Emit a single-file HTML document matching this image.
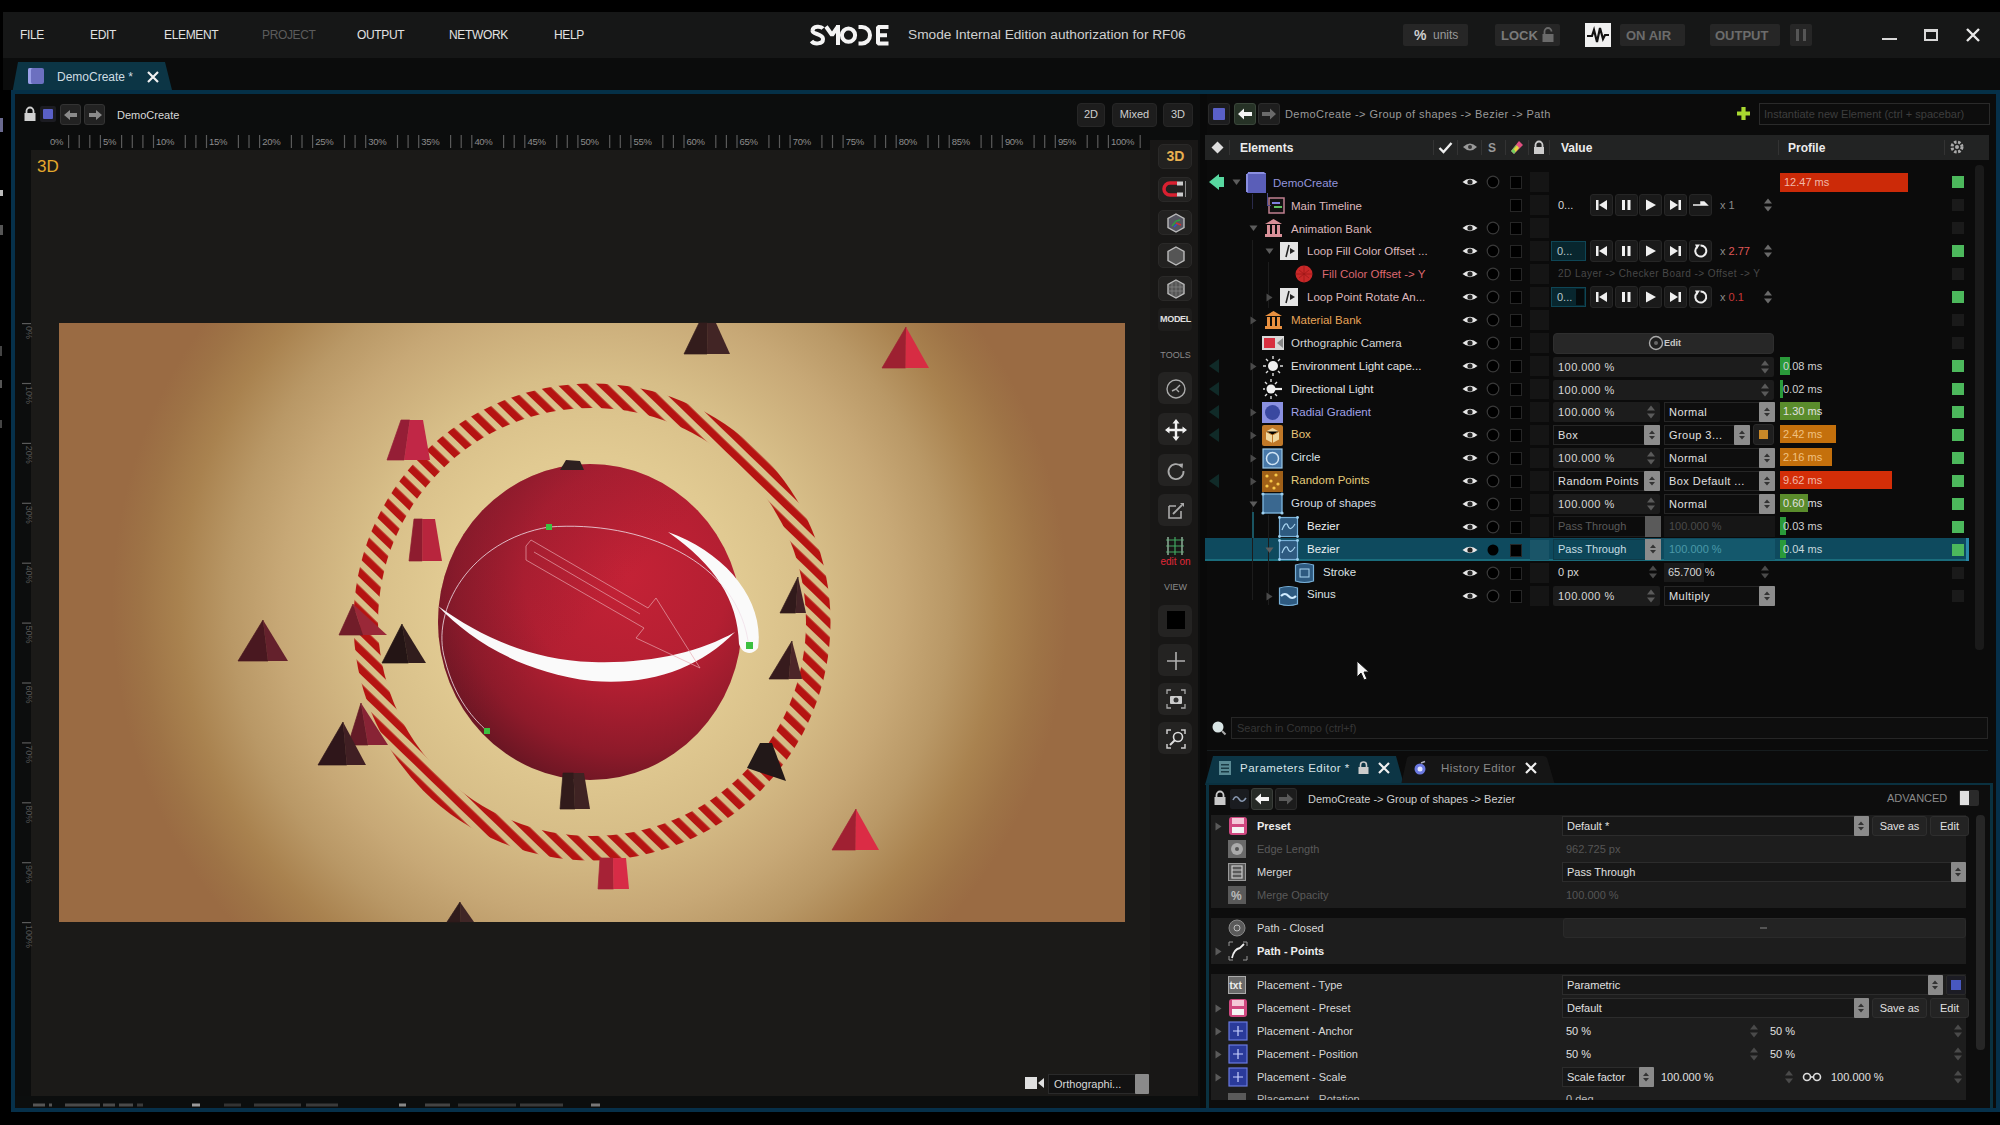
<!DOCTYPE html>
<html><head><meta charset="utf-8">
<style>
*{margin:0;padding:0;box-sizing:border-box}
html,body{width:2000px;height:1125px;overflow:hidden;background:#000;font-family:"Liberation Sans",sans-serif;color:#ddd}
.a{position:absolute}
.t{position:absolute;white-space:nowrap;line-height:1}
svg{position:absolute;overflow:visible}
</style></head><body>
<div class="a" style="left:3px;top:12px;width:1997px;height:46px;background:#161717;"></div>
<div class="a" style="left:3px;top:58px;width:1997px;height:32px;background:#0b0c0c;"></div>
<div class="a" style="left:0px;top:1112px;width:2000px;height:13px;background:#000;"></div>
<div class="t" style="left:20px;top:29.0px;font-size:12px;color:#e2e2e2;font-weight:normal;letter-spacing:-0.35px">FILE</div>
<div class="t" style="left:90px;top:29.0px;font-size:12px;color:#e2e2e2;font-weight:normal;letter-spacing:-0.35px">EDIT</div>
<div class="t" style="left:164px;top:29.0px;font-size:12px;color:#e2e2e2;font-weight:normal;letter-spacing:-0.35px">ELEMENT</div>
<div class="t" style="left:262px;top:29.0px;font-size:12px;color:#5c5c5c;font-weight:normal;letter-spacing:-0.35px">PROJECT</div>
<div class="t" style="left:357px;top:29.0px;font-size:12px;color:#e2e2e2;font-weight:normal;letter-spacing:-0.35px">OUTPUT</div>
<div class="t" style="left:449px;top:29.0px;font-size:12px;color:#e2e2e2;font-weight:normal;letter-spacing:-0.35px">NETWORK</div>
<div class="t" style="left:554px;top:29.0px;font-size:12px;color:#e2e2e2;font-weight:normal;letter-spacing:-0.35px">HELP</div>
<svg style="left:808px;top:22px" width="84" height="26"><g fill="none" stroke="#f4f4f4" stroke-width="4" stroke-linejoin="bevel"><path d="M15 6.5C13 4 5 3.5 4.5 8.5C4 12.5 15 11.5 15 17C15 22.5 6 22.5 3.5 19"/><path d="M18 4.5L24 13L30 4.5"/><path d="M30 3V23"/><circle cx="40.5" cy="13.2" r="6.6"/><path d="M50.5 5H54A8 8.2 0 0 1 54 21.4H50.5"/><path d="M80.5 5H70V21.4H80.5M70 13.2H79"/></g></svg>
<div class="t" style="left:908px;top:28.1px;font-size:13.7px;color:#d0d0d0;font-weight:normal;">Smode Internal Edition authorization for RF06</div>
<div class="a" style="left:1403px;top:24px;width:65px;height:22px;background:#262626;border-radius:2px;"></div>
<div class="t" style="left:1414px;top:28.0px;font-size:14px;color:#cfcfcf;font-weight:bold;">%</div>
<div class="t" style="left:1433px;top:29.0px;font-size:12px;color:#9a9a9a;font-weight:normal;">units</div>
<div class="a" style="left:1495px;top:24px;width:65px;height:22px;background:#262626;border-radius:2px;"></div>
<div class="t" style="left:1501px;top:28.5px;font-size:13px;color:#7a7a7a;font-weight:bold;">LOCK</div>
<svg style="left:1541px;top:27px" width="14" height="16"><path d="M3.5 7V4.5a3.5 3.5 0 0 1 7 0" fill="none" stroke="#6a6a6a" stroke-width="1.8"/><rect x="1.5" y="7" width="11" height="8" fill="#6a6a6a"/></svg>
<div class="a" style="left:1585px;top:23px;width:26px;height:24px;background:#f0f0f0;"></div>
<svg style="left:1585px;top:23px" width="26" height="24"><polyline points="2,13 7,13 9,7 12,19 15,5 18,16 20,12 24,12" fill="none" stroke="#111" stroke-width="2.2"/></svg>
<div class="a" style="left:1620px;top:24px;width:65px;height:22px;background:#262626;border-radius:2px;"></div>
<div class="t" style="left:1626px;top:28.5px;font-size:13px;color:#6c6c6c;font-weight:bold;">ON AIR</div>
<div class="a" style="left:1710px;top:24px;width:70px;height:22px;background:#262626;border-radius:2px;"></div>
<div class="t" style="left:1715px;top:28.5px;font-size:13px;color:#6c6c6c;font-weight:bold;">OUTPUT</div>
<div class="a" style="left:1790px;top:24px;width:22px;height:22px;background:#262626;border-radius:2px;"></div>
<div class="a" style="left:1796px;top:29px;width:3px;height:12px;background:#555;"></div>
<div class="a" style="left:1803px;top:29px;width:3px;height:12px;background:#555;"></div>
<div class="a" style="left:1882px;top:38px;width:15px;height:2px;background:#d8d8d8;"></div>
<div class="a" style="left:1924px;top:29px;width:14px;height:12px;border:2px solid #d8d8d8;border-top-width:3px"></div>
<svg style="left:1965px;top:27px" width="16" height="16"><path d="M2 2L14 14M14 2L2 14" stroke="#e8e8e8" stroke-width="2.4"/></svg>
<svg style="left:10px;top:61px" width="170" height="33"><path d="M2 33 L8 1 L155 1 L163 33 Z" fill="#0c3545"/></svg>
<div class="a" style="left:28px;top:68px;width:16px;height:16px;background:#6c70c0;border-radius:2px;box-shadow:inset 3px 0 0 #9aa0e8"></div>
<div class="t" style="left:57px;top:71.0px;font-size:12px;color:#cfdde3;font-weight:normal;">DemoCreate *</div>
<svg style="left:147px;top:71px" width="12" height="12"><path d="M1 1L11 11M11 1L1 11" stroke="#f0f0f0" stroke-width="2.2"/></svg>
<div class="a" style="left:11px;top:90px;width:1989px;height:4px;background:#053047;"></div>
<div class="a" style="left:11px;top:90px;width:4px;height:1022px;background:#06304a;"></div>
<div class="a" style="left:11px;top:1108px;width:1989px;height:4px;background:#06304a;"></div>
<div class="a" style="left:1996px;top:90px;width:4px;height:1022px;background:#06304a;"></div>
<div class="a" style="left:15px;top:94px;width:1185px;height:1014px;background:#0c0d0d;"></div>
<div class="a" style="left:31px;top:150px;width:1119px;height:946px;background:#1b1a18;"></div>
<div class="a" style="left:1150px;top:140px;width:48px;height:956px;background:#181716;"></div>
<div class="a" style="left:15px;top:1096px;width:1185px;height:12px;background:#0c0e0e;"></div>
<svg style="left:23px;top:106px" width="14" height="16"><path d="M3.5 7V5a3.5 3.5 0 0 1 7 0v2" fill="none" stroke="#d0d0d0" stroke-width="1.8"/><rect x="1.5" y="7" width="11" height="8" fill="#d0d0d0"/></svg>
<div class="a" style="left:40px;top:106px;width:16px;height:16px;background:#1c1c22;border-radius:2px"></div>
<div class="a" style="left:43px;top:109px;width:10px;height:10px;background:#5a60c8;border-radius:1px"></div>
<div class="a" style="left:60px;top:104px;width:21px;height:21px;background:#222;border:1px solid #333;border-radius:3px"></div>
<div class="a" style="left:84px;top:104px;width:21px;height:21px;background:#222;border:1px solid #333;border-radius:3px"></div>
<svg style="left:62px;top:107px" width="18" height="16"><path d="M2 8L8 3V6H15V10H8V13Z" fill="#8a8a8a"/></svg>
<svg style="left:86px;top:107px" width="18" height="16"><path d="M16 8L10 3V6H3V10H10V13Z" fill="#8a8a8a"/></svg>
<div class="t" style="left:117px;top:109.5px;font-size:11px;color:#d8d8d8;font-weight:normal;">DemoCreate</div>
<div class="a" style="left:1077px;top:103px;width:28px;height:24px;background:#1d1d1d;border:1px solid #262626;border-radius:4px"></div>
<div class="t" style="left:1077px;top:109px;width:28px;text-align:center;font-size:11px;color:#cfcfcf">2D</div>
<div class="a" style="left:1112px;top:103px;width:45px;height:24px;background:#1d1d1d;border:1px solid #262626;border-radius:4px"></div>
<div class="t" style="left:1112px;top:109px;width:45px;text-align:center;font-size:11px;color:#cfcfcf">Mixed</div>
<div class="a" style="left:1163px;top:103px;width:30px;height:24px;background:#1d1d1d;border:1px solid #262626;border-radius:4px"></div>
<div class="t" style="left:1163px;top:109px;width:30px;text-align:center;font-size:11px;color:#cfcfcf">3D</div>
<svg style="left:0px;top:130px" width="1150" height="20"><text x="50.0" y="14.5" font-size="9.5" fill="#8c8c8c" font-family="Liberation Sans" letter-spacing="-0.3">0%</text><text x="103.0" y="14.5" font-size="9.5" fill="#8c8c8c" font-family="Liberation Sans" letter-spacing="-0.3">5%</text><text x="156.1" y="14.5" font-size="9.5" fill="#8c8c8c" font-family="Liberation Sans" letter-spacing="-0.3">10%</text><text x="209.1" y="14.5" font-size="9.5" fill="#8c8c8c" font-family="Liberation Sans" letter-spacing="-0.3">15%</text><text x="262.2" y="14.5" font-size="9.5" fill="#8c8c8c" font-family="Liberation Sans" letter-spacing="-0.3">20%</text><text x="315.2" y="14.5" font-size="9.5" fill="#8c8c8c" font-family="Liberation Sans" letter-spacing="-0.3">25%</text><text x="368.3" y="14.5" font-size="9.5" fill="#8c8c8c" font-family="Liberation Sans" letter-spacing="-0.3">30%</text><text x="421.3" y="14.5" font-size="9.5" fill="#8c8c8c" font-family="Liberation Sans" letter-spacing="-0.3">35%</text><text x="474.4" y="14.5" font-size="9.5" fill="#8c8c8c" font-family="Liberation Sans" letter-spacing="-0.3">40%</text><text x="527.5" y="14.5" font-size="9.5" fill="#8c8c8c" font-family="Liberation Sans" letter-spacing="-0.3">45%</text><text x="580.5" y="14.5" font-size="9.5" fill="#8c8c8c" font-family="Liberation Sans" letter-spacing="-0.3">50%</text><text x="633.5" y="14.5" font-size="9.5" fill="#8c8c8c" font-family="Liberation Sans" letter-spacing="-0.3">55%</text><text x="686.6" y="14.5" font-size="9.5" fill="#8c8c8c" font-family="Liberation Sans" letter-spacing="-0.3">60%</text><text x="739.6" y="14.5" font-size="9.5" fill="#8c8c8c" font-family="Liberation Sans" letter-spacing="-0.3">65%</text><text x="792.7" y="14.5" font-size="9.5" fill="#8c8c8c" font-family="Liberation Sans" letter-spacing="-0.3">70%</text><text x="845.8" y="14.5" font-size="9.5" fill="#8c8c8c" font-family="Liberation Sans" letter-spacing="-0.3">75%</text><text x="898.8" y="14.5" font-size="9.5" fill="#8c8c8c" font-family="Liberation Sans" letter-spacing="-0.3">80%</text><text x="951.8" y="14.5" font-size="9.5" fill="#8c8c8c" font-family="Liberation Sans" letter-spacing="-0.3">85%</text><text x="1004.9" y="14.5" font-size="9.5" fill="#8c8c8c" font-family="Liberation Sans" letter-spacing="-0.3">90%</text><text x="1057.9" y="14.5" font-size="9.5" fill="#8c8c8c" font-family="Liberation Sans" letter-spacing="-0.3">95%</text><text x="1111.0" y="14.5" font-size="9.5" fill="#8c8c8c" font-family="Liberation Sans" letter-spacing="-0.3">100%</text><rect x="68.0" y="5" width="1.2" height="13" fill="#5a5a5a"/><rect x="78.6" y="5" width="1.2" height="13" fill="#5a5a5a"/><rect x="89.2" y="5" width="1.2" height="13" fill="#5a5a5a"/><rect x="99.8" y="5" width="1.2" height="13" fill="#5a5a5a"/><rect x="121.0" y="5" width="1.2" height="13" fill="#5a5a5a"/><rect x="131.7" y="5" width="1.2" height="13" fill="#5a5a5a"/><rect x="142.3" y="5" width="1.2" height="13" fill="#5a5a5a"/><rect x="152.9" y="5" width="1.2" height="13" fill="#5a5a5a"/><rect x="184.7" y="5" width="1.2" height="13" fill="#5a5a5a"/><rect x="195.3" y="5" width="1.2" height="13" fill="#5a5a5a"/><rect x="205.9" y="5" width="1.2" height="13" fill="#5a5a5a"/><rect x="237.8" y="5" width="1.2" height="13" fill="#5a5a5a"/><rect x="248.4" y="5" width="1.2" height="13" fill="#5a5a5a"/><rect x="259.0" y="5" width="1.2" height="13" fill="#5a5a5a"/><rect x="290.8" y="5" width="1.2" height="13" fill="#5a5a5a"/><rect x="301.4" y="5" width="1.2" height="13" fill="#5a5a5a"/><rect x="312.0" y="5" width="1.2" height="13" fill="#5a5a5a"/><rect x="343.9" y="5" width="1.2" height="13" fill="#5a5a5a"/><rect x="354.5" y="5" width="1.2" height="13" fill="#5a5a5a"/><rect x="365.1" y="5" width="1.2" height="13" fill="#5a5a5a"/><rect x="396.9" y="5" width="1.2" height="13" fill="#5a5a5a"/><rect x="407.5" y="5" width="1.2" height="13" fill="#5a5a5a"/><rect x="418.1" y="5" width="1.2" height="13" fill="#5a5a5a"/><rect x="450.0" y="5" width="1.2" height="13" fill="#5a5a5a"/><rect x="460.6" y="5" width="1.2" height="13" fill="#5a5a5a"/><rect x="471.2" y="5" width="1.2" height="13" fill="#5a5a5a"/><rect x="503.0" y="5" width="1.2" height="13" fill="#5a5a5a"/><rect x="513.6" y="5" width="1.2" height="13" fill="#5a5a5a"/><rect x="524.2" y="5" width="1.2" height="13" fill="#5a5a5a"/><rect x="556.1" y="5" width="1.2" height="13" fill="#5a5a5a"/><rect x="566.7" y="5" width="1.2" height="13" fill="#5a5a5a"/><rect x="577.3" y="5" width="1.2" height="13" fill="#5a5a5a"/><rect x="609.1" y="5" width="1.2" height="13" fill="#5a5a5a"/><rect x="619.7" y="5" width="1.2" height="13" fill="#5a5a5a"/><rect x="630.3" y="5" width="1.2" height="13" fill="#5a5a5a"/><rect x="662.2" y="5" width="1.2" height="13" fill="#5a5a5a"/><rect x="672.8" y="5" width="1.2" height="13" fill="#5a5a5a"/><rect x="683.4" y="5" width="1.2" height="13" fill="#5a5a5a"/><rect x="715.2" y="5" width="1.2" height="13" fill="#5a5a5a"/><rect x="725.8" y="5" width="1.2" height="13" fill="#5a5a5a"/><rect x="736.4" y="5" width="1.2" height="13" fill="#5a5a5a"/><rect x="768.3" y="5" width="1.2" height="13" fill="#5a5a5a"/><rect x="778.9" y="5" width="1.2" height="13" fill="#5a5a5a"/><rect x="789.5" y="5" width="1.2" height="13" fill="#5a5a5a"/><rect x="821.3" y="5" width="1.2" height="13" fill="#5a5a5a"/><rect x="831.9" y="5" width="1.2" height="13" fill="#5a5a5a"/><rect x="842.5" y="5" width="1.2" height="13" fill="#5a5a5a"/><rect x="874.4" y="5" width="1.2" height="13" fill="#5a5a5a"/><rect x="885.0" y="5" width="1.2" height="13" fill="#5a5a5a"/><rect x="895.6" y="5" width="1.2" height="13" fill="#5a5a5a"/><rect x="927.4" y="5" width="1.2" height="13" fill="#5a5a5a"/><rect x="938.0" y="5" width="1.2" height="13" fill="#5a5a5a"/><rect x="948.6" y="5" width="1.2" height="13" fill="#5a5a5a"/><rect x="980.5" y="5" width="1.2" height="13" fill="#5a5a5a"/><rect x="991.1" y="5" width="1.2" height="13" fill="#5a5a5a"/><rect x="1001.7" y="5" width="1.2" height="13" fill="#5a5a5a"/><rect x="1033.5" y="5" width="1.2" height="13" fill="#5a5a5a"/><rect x="1044.1" y="5" width="1.2" height="13" fill="#5a5a5a"/><rect x="1054.7" y="5" width="1.2" height="13" fill="#5a5a5a"/><rect x="1086.6" y="5" width="1.2" height="13" fill="#5a5a5a"/><rect x="1097.2" y="5" width="1.2" height="13" fill="#5a5a5a"/><rect x="1107.8" y="5" width="1.2" height="13" fill="#5a5a5a"/><rect x="1139.6" y="5" width="1.2" height="13" fill="#5a5a5a"/></svg>
<svg style="left:15px;top:150px" width="16" height="946"><rect x="7" y="173.0" width="9" height="1.2" fill="#5a5a5a"/><text transform="translate(11,176.0) rotate(90)" font-size="9" fill="#555" font-family="Liberation Sans">0%</text><rect x="7" y="232.9" width="9" height="1.2" fill="#5a5a5a"/><text transform="translate(11,235.9) rotate(90)" font-size="9" fill="#555" font-family="Liberation Sans">10%</text><rect x="7" y="292.8" width="9" height="1.2" fill="#5a5a5a"/><text transform="translate(11,295.8) rotate(90)" font-size="9" fill="#555" font-family="Liberation Sans">20%</text><rect x="7" y="352.7" width="9" height="1.2" fill="#5a5a5a"/><text transform="translate(11,355.7) rotate(90)" font-size="9" fill="#555" font-family="Liberation Sans">30%</text><rect x="7" y="412.6" width="9" height="1.2" fill="#5a5a5a"/><text transform="translate(11,415.6) rotate(90)" font-size="9" fill="#555" font-family="Liberation Sans">40%</text><rect x="7" y="472.5" width="9" height="1.2" fill="#5a5a5a"/><text transform="translate(11,475.5) rotate(90)" font-size="9" fill="#555" font-family="Liberation Sans">50%</text><rect x="7" y="532.4" width="9" height="1.2" fill="#5a5a5a"/><text transform="translate(11,535.4) rotate(90)" font-size="9" fill="#555" font-family="Liberation Sans">60%</text><rect x="7" y="592.3" width="9" height="1.2" fill="#5a5a5a"/><text transform="translate(11,595.3) rotate(90)" font-size="9" fill="#555" font-family="Liberation Sans">70%</text><rect x="7" y="652.2" width="9" height="1.2" fill="#5a5a5a"/><text transform="translate(11,655.2) rotate(90)" font-size="9" fill="#555" font-family="Liberation Sans">80%</text><rect x="7" y="712.1" width="9" height="1.2" fill="#5a5a5a"/><text transform="translate(11,715.1) rotate(90)" font-size="9" fill="#555" font-family="Liberation Sans">90%</text><rect x="7" y="772.0" width="9" height="1.2" fill="#5a5a5a"/><text transform="translate(11,775.0) rotate(90)" font-size="9" fill="#555" font-family="Liberation Sans">100%</text></svg>
<div class="t" style="left:37px;top:157.5px;font-size:17px;color:#e4a82c;font-weight:normal;">3D</div>
<div class="a" style="left:59px;top:323px;width:1066px;height:599px;background:radial-gradient(circle at 531px 282px,#e7d49c 0px,#e1ca92 150px,#d7be88 230px,#c7a876 310px,#b99866 360px,#a9824f 410px,#9e7346 450px,#9a6b43 478px,#9a6b43 800px)"></div>
<svg style="left:59px;top:323px" width="1066" height="599" viewBox="59 323 1066 599">
<defs>
<radialGradient id="sph" cx="0.62" cy="0.35" r="0.75">
<stop offset="0" stop-color="#c42236"/>
<stop offset="0.45" stop-color="#b41f32"/>
<stop offset="0.75" stop-color="#8e1a2a"/>
<stop offset="1" stop-color="#5a1420"/>
</radialGradient>
<linearGradient id="sphShade" x1="0" y1="0" x2="1" y2="1">
<stop offset="0" stop-color="#7a1a2c" stop-opacity="0.55"/>
<stop offset="0.5" stop-color="#7a1a2c" stop-opacity="0"/>
</linearGradient>
<pattern id="stripes" patternUnits="userSpaceOnUse" width="13.8" height="13.8" patternTransform="rotate(-46)">
<rect x="0" y="0" width="7.6" height="13.8" fill="#b51412"/>
</pattern>
<mask id="ringmask">
<circle cx="592" cy="622" r="238.5" fill="white"/>
<circle cx="592" cy="622" r="214" fill="black"/>
</mask>
<linearGradient id="pyrD" x1="0" y1="0" x2="1" y2="1">
<stop offset="0" stop-color="#3a2220"/><stop offset="1" stop-color="#5a2a2c"/>
</linearGradient>
<linearGradient id="pyrR" x1="0" y1="0" x2="1" y2="1">
<stop offset="0" stop-color="#b8283c"/><stop offset="1" stop-color="#d03048"/>
</linearGradient>
</defs>
<rect x="59" y="323" width="1066" height="599" fill="url(#stripes)" mask="url(#ringmask)"/>
<ellipse cx="590" cy="622" rx="152" ry="158" fill="url(#sph)"/>
<ellipse cx="590" cy="622" rx="152" ry="158" fill="url(#sphShade)"/>
<polygon points="699,323 707.5,323 707.0,354 684,354" fill="#331c1c" stroke="#331c1c" stroke-width="0.7"/><polygon points="707.5,323 716,323 730,354 707.0,354" fill="#422525"/><polygon points="906,327 882,368 905.5,368" fill="#9d2031" stroke="#9d2031" stroke-width="0.7"/><polygon points="906,327 905.5,368 929,368" fill="#d72c43"/><polygon points="401,420 409.8,420 404.2,460 387,460" fill="#951e36" stroke="#951e36" stroke-width="0.7"/><polygon points="409.8,420 423,420 430,460 404.2,460" fill="#c12746"/><polygon points="414,519 422.4,519 422.2,561 409,561" fill="#8e1c2f" stroke="#8e1c2f" stroke-width="0.7"/><polygon points="422.4,519 435,519 442,561 422.2,561" fill="#b8253d"/><polygon points="263,620 238,661 268.0,661" fill="#491820" stroke="#491820" stroke-width="0.7"/><polygon points="263,620 268.0,661 288,661" fill="#64212c"/><polygon points="353,604 339,635 363.0,635" fill="#711d29" stroke="#711d29" stroke-width="0.7"/><polygon points="353,604 363.0,635 387,635" fill="#9a2838"/><polygon points="402,624 382,663 408.4,663" fill="#241515" stroke="#241515" stroke-width="0.7"/><polygon points="402,624 408.4,663 426,663" fill="#311d1d"/><polygon points="361,703 348,745 368.0,745" fill="#641a27" stroke="#641a27" stroke-width="0.7"/><polygon points="361,703 368.0,745 388,745" fill="#882335"/><polygon points="343,722 318,765 346.8,765" fill="#2f161a" stroke="#2f161a" stroke-width="0.7"/><polygon points="343,722 346.8,765 366,765" fill="#401f23"/><polygon points="563,773 573.5,773 575.0,809 560,809" fill="#311b1b" stroke="#311b1b" stroke-width="0.7"/><polygon points="573.5,773 584,773 590,809 575.0,809" fill="#3f2323"/><polygon points="560,470 566,460 580,461 584,470" fill="#2e2020"/><polygon points="798,577 780,613 795.6,613" fill="#311a1b" stroke="#311a1b" stroke-width="0.7"/><polygon points="798,577 795.6,613 806,613" fill="#432326"/><polygon points="792,641 769,679 788.8,679" fill="#371b1d" stroke="#371b1d" stroke-width="0.7"/><polygon points="792,641 788.8,679 802,679" fill="#4c2628"/><polygon points="760,743 772,743 786,781 747,768" fill="#221818"/><polygon points="856,809 832,850 855.5,850" fill="#a02032" stroke="#a02032" stroke-width="0.7"/><polygon points="856,809 855.5,850 879,850" fill="#db2c45"/><polygon points="600,858 613.0,858 613.5,889 598,889" fill="#a62236" stroke="#a62236" stroke-width="0.7"/><polygon points="613.0,858 626,858 629,889 613.5,889" fill="#d72c46"/><polygon points="460,902 447,922 460.5,922" fill="#2f1b1b" stroke="#2f1b1b" stroke-width="0.7"/><polygon points="460,902 460.5,922 474,922" fill="#402626"/>
<path d="M438,606 C470,640 520,672 592,681 C650,686 700,668 735,632 C700,652 650,664 592,662 C530,660 480,636 438,606 Z" fill="#fafafa"/>
<path d="M668,532 C725,552 765,600 758,648 C752,656 742,654 739,644 C738,600 715,565 668,532 Z" fill="#fafafa"/>
<path d="M749,648 C740,560 640,520 549,527 C470,540 430,610 445,660 C455,700 475,720 487,731" fill="none" stroke="#f0e0e8" stroke-width="1" opacity="0.8"/>
<path d="M526,546 L531,540 L648,608 L656,598 L700,668 L636,638 L644,628 L526,560 Z M534,552 L640,614" fill="none" stroke="#e8a8b0" stroke-width="0.9" opacity="0.75"/>
<rect x="546" y="524" width="6" height="6" fill="#3cc040"/>
<rect x="484" y="728" width="6" height="6" fill="#3cc040"/>
<rect x="746" y="642" width="7" height="7" fill="#3cc040"/>
</svg>
<div class="a" style="left:1158px;top:144px;width:34px;height:25px;background:#222120;border-radius:5px;border:1px solid #2a2928"></div>
<div class="a" style="left:1158px;top:177px;width:34px;height:25px;background:#222120;border-radius:5px;border:1px solid #2a2928"></div>
<div class="a" style="left:1158px;top:210px;width:34px;height:25px;background:#222120;border-radius:5px;border:1px solid #2a2928"></div>
<div class="a" style="left:1158px;top:243px;width:34px;height:25px;background:#222120;border-radius:5px;border:1px solid #2a2928"></div>
<div class="a" style="left:1158px;top:276px;width:34px;height:25px;background:#222120;border-radius:5px;border:1px solid #2a2928"></div>
<div class="a" style="left:1158px;top:308px;width:34px;height:23px;background:#1e1d1c;border-radius:4px"></div>
<div class="a" style="left:1158px;top:372px;width:34px;height:32px;background:#242322;border-radius:6px"></div>
<div class="a" style="left:1158px;top:413px;width:34px;height:32px;background:#242322;border-radius:6px"></div>
<div class="a" style="left:1158px;top:454px;width:34px;height:32px;background:#242322;border-radius:6px"></div>
<div class="a" style="left:1158px;top:494px;width:34px;height:32px;background:#242322;border-radius:6px"></div>
<div class="a" style="left:1158px;top:605px;width:34px;height:32px;background:#242322;border-radius:6px"></div>
<div class="a" style="left:1158px;top:644px;width:34px;height:32px;background:#242322;border-radius:6px"></div>
<div class="a" style="left:1158px;top:683px;width:34px;height:32px;background:#242322;border-radius:6px"></div>
<div class="a" style="left:1158px;top:722px;width:34px;height:32px;background:#242322;border-radius:6px"></div>
<div class="t" style="left:1159px;top:149px;width:33px;text-align:center;font-size:14px;font-weight:bold;color:#e8b050">3D</div>
<svg style="left:1163px;top:180px" width="26" height="18"><path d="M14 3H7a6 6 0 0 0 0 12h7" fill="none" stroke="#d82030" stroke-width="3.5"/><rect x="14" y="1.5" width="6" height="4" fill="#ccc"/><rect x="14" y="12.5" width="6" height="4" fill="#ccc"/><rect x="22" y="1" width="1" height="16" fill="#888"/></svg>
<svg style="left:1165px;top:212px" width="22" height="22"><path d="M11 2L19 6.5V15.5L11 20L3 15.5V6.5Z" fill="#555560" stroke="#bbb" stroke-width="1.4"/><path d="M7 14L11 9L15 8" stroke="#30a040" stroke-width="1.4" fill="none"/><path d="M9 15L13 11" stroke="#3050d0" stroke-width="1.4"/><path d="M11 11L16 13" stroke="#d03030" stroke-width="1.4"/></svg>
<svg style="left:1165px;top:245px" width="22" height="22"><path d="M11 2L19 6.5V15.5L11 20L3 15.5V6.5Z" fill="#555" stroke="#bbb" stroke-width="1.4"/></svg>
<svg style="left:1165px;top:278px" width="22" height="22"><path d="M11 2L19 6.5V15.5L11 20L3 15.5V6.5Z" fill="#555" stroke="#bbb" stroke-width="1.4"/><path d="M7 5V17M11 3V19M15 5V17M3 9H19M3 13H19" stroke="#888" stroke-width="0.7"/></svg>
<div class="t" style="left:1159px;top:315px;width:33px;text-align:center;font-size:9px;font-weight:bold;color:#e0e0e0;letter-spacing:-0.3px">MODEL</div>
<div class="t" style="left:1159px;top:351px;width:33px;text-align:center;font-size:9px;color:#8a8a8a">TOOLS</div>
<svg style="left:1165px;top:378px" width="22" height="22"><circle cx="11" cy="11" r="9" fill="none" stroke="#aaa" stroke-width="1.4"/><path d="M11 11L15 7M11 11L14 14M11 11L7 13" stroke="#aaa" stroke-width="1.4"/></svg>
<svg style="left:1165px;top:419px" width="22" height="22"><path d="M11 2V20M2 11H20" stroke="#f0f0f0" stroke-width="2.4"/><path d="M11 0L7.5 4.5H14.5ZM11 22L7.5 17.5H14.5ZM0 11L4.5 7.5V14.5ZM22 11L17.5 7.5V14.5Z" fill="#f0f0f0"/></svg>
<svg style="left:1165px;top:460px" width="22" height="22"><path d="M16.5 6.5A7.5 7.5 0 1 0 18.5 11" fill="none" stroke="#aaa" stroke-width="1.8"/><path d="M13 4L18 3.5L17.5 8.5Z" fill="#aaa"/></svg>
<svg style="left:1165px;top:500px" width="22" height="22"><path d="M4 6H11M4 6V18H16V11" fill="none" stroke="#aaa" stroke-width="1.6"/><path d="M8 14L17 5" stroke="#aaa" stroke-width="1.8"/><path d="M15 3L19 3L19 7Z" fill="#aaa"/></svg>
<svg style="left:1164px;top:535px" width="24" height="22"><path d="M4 2V20M11 2V20M18 2V20M2 5H20M2 11H20M2 17H20" stroke="#40a860" stroke-width="1.2"/><path d="M4 2V20M18 2V20" stroke="#9a9a9a" stroke-width="1.2"/></svg>
<div class="t" style="left:1155px;top:557px;width:41px;text-align:center;font-size:10px;color:#e02838">edit on</div>
<div class="t" style="left:1159px;top:583px;width:33px;text-align:center;font-size:9px;color:#8a8a8a">VIEW</div>
<div class="a" style="left:1167px;top:611px;width:18px;height:18px;background:#000;"></div>
<svg style="left:1165px;top:650px" width="22" height="22"><path d="M11 2V20M2 11H20" stroke="#b0b0b0" stroke-width="1.6"/></svg>
<svg style="left:1165px;top:688px" width="22" height="22"><path d="M2 6V2H6M16 2H20V6M20 16V20H16M6 20H2V16" fill="none" stroke="#aaa" stroke-width="1.3"/><rect x="5" y="8" width="12" height="8" rx="1" fill="#ccc"/><circle cx="11" cy="12" r="2.5" fill="#333"/></svg>
<svg style="left:1165px;top:728px" width="22" height="22"><path d="M2 6V2H6M16 2H20V6M20 16V20H16M6 20H2V16" fill="none" stroke="#ccc" stroke-width="1.5"/><circle cx="13" cy="9" r="4.5" fill="none" stroke="#ddd" stroke-width="1.6"/><path d="M10 12L5 17" stroke="#ddd" stroke-width="2"/></svg>
<svg style="left:1025px;top:1076px" width="20" height="14"><rect x="0" y="1" width="12" height="12" fill="#e0e0e0"/><path d="M13 7L19 2V12Z" fill="#e0e0e0"/></svg>
<div class="a" style="left:1048px;top:1074px;width:88px;height:20px;background:#121212;border:1px solid #2a2a2a"></div>
<div class="t" style="left:1054px;top:1078.5px;font-size:11px;color:#d8d8d8;font-weight:normal;">Orthographi...</div>
<div class="a" style="left:1135px;top:1074px;width:14px;height:20px;background:#8a8a8a;border-radius:1px"></div>
<div class="a" style="left:1200px;top:94px;width:7px;height:1014px;background:#090909;"></div>
<div class="a" style="left:1207px;top:94px;width:793px;height:1014px;background:#0b0b0b;"></div>
<div class="a" style="left:1208px;top:103px;width:22px;height:22px;background:#1c1c1e;border:1px solid #2a2a2a;border-radius:3px"></div>
<div class="a" style="left:1213px;top:108px;width:12px;height:12px;background:#5a60c8;border-radius:1px"></div>
<div class="a" style="left:1234px;top:103px;width:22px;height:22px;background:#263226;border:1px solid #3a463a;border-radius:3px"></div>
<svg style="left:1236px;top:106px" width="18" height="16"><path d="M2 8L8 2.5V6H16V10H8V13.5Z" fill="#f4f4f4"/></svg>
<div class="a" style="left:1258px;top:103px;width:22px;height:22px;background:#1e1e1e;border:1px solid #2c2c2c;border-radius:3px"></div>
<svg style="left:1260px;top:106px" width="18" height="16"><path d="M16 8L10 2.5V6H2V10H10V13.5Z" fill="#6a6a6a"/></svg>
<div class="t" style="left:1285px;top:108.5px;font-size:11px;color:#9a9a9a;font-weight:normal;letter-spacing:0.42px">DemoCreate -&gt; Group of shapes -&gt; Bezier -&gt; Path</div>
<svg style="left:1736px;top:106px" width="15" height="15"><path d="M7.5 1V14M1 7.5H14" stroke="#a8d830" stroke-width="4.2"/></svg>
<div class="a" style="left:1759px;top:103px;width:231px;height:22px;background:#0d0d0d;border:1px solid #2a2a2a"></div>
<div class="t" style="left:1764px;top:108.5px;font-size:11px;color:#3e3e3e;font-weight:normal;">Instantiate new Element (ctrl + spacebar)</div>
<div class="a" style="left:1205px;top:135px;width:784px;height:25px;background:#222323;"></div>
<svg style="left:1211px;top:141px" width="13" height="13"><path d="M6.5 0.5L12.5 6.5L6.5 12.5L0.5 6.5Z" fill="#ddd"/></svg>
<div class="a" style="left:1229px;top:140px;width:1px;height:15px;background:#333;"></div>
<div class="t" style="left:1240px;top:141.5px;font-size:12px;color:#ececec;font-weight:bold;">Elements</div>
<div class="a" style="left:1433px;top:140px;width:1px;height:15px;background:#333;"></div>
<div class="a" style="left:1457px;top:140px;width:1px;height:15px;background:#333;"></div>
<div class="a" style="left:1481px;top:140px;width:1px;height:15px;background:#333;"></div>
<div class="a" style="left:1505px;top:140px;width:1px;height:15px;background:#333;"></div>
<div class="a" style="left:1528px;top:140px;width:1px;height:15px;background:#333;"></div>
<div class="a" style="left:1549px;top:140px;width:1px;height:15px;background:#333;"></div>
<svg style="left:1438px;top:141px" width="15" height="13"><path d="M1.5 7L5.5 11L13.5 2" fill="none" stroke="#eee" stroke-width="2.4"/></svg>
<svg style="left:1462px;top:142px" width="16" height="10"><path d="M1 5Q8 -2 15 5Q8 12 1 5Z" fill="#9a9a9a"/><circle cx="8" cy="5" r="2" fill="#333"/></svg>
<div class="t" style="left:1488px;top:141.5px;font-size:12px;color:#9a9a9a;font-weight:bold;">S</div>
<svg style="left:1508px;top:139px" width="16" height="16"><path d="M3 12L11 2L15 6L6 15Z" fill="#e05080"/><path d="M3 12L8 6L11 9L6 15Z" fill="#70d060"/><path d="M6 10L9 6.5L11 9L7.5 13Z" fill="#f0d040"/></svg>
<svg style="left:1532px;top:140px" width="14" height="15"><path d="M3.5 7V5a3.5 3.5 0 0 1 7 0v2" fill="none" stroke="#ccc" stroke-width="1.8"/><rect x="2" y="7" width="10" height="7" fill="#ccc"/></svg>
<div class="t" style="left:1561px;top:141.5px;font-size:12px;color:#ececec;font-weight:bold;">Value</div>
<div class="a" style="left:1778px;top:140px;width:1px;height:15px;background:#333;"></div>
<div class="t" style="left:1788px;top:141.5px;font-size:12px;color:#ececec;font-weight:bold;">Profile</div>
<div class="a" style="left:1944px;top:140px;width:1px;height:15px;background:#333;"></div>
<svg style="left:1949px;top:139px" width="16" height="16"><circle cx="8" cy="8" r="5" fill="none" stroke="#aaa" stroke-width="3" stroke-dasharray="2.5 1.5"/><circle cx="8" cy="8" r="2" fill="#aaa"/></svg>
<div class="a" style="left:1975px;top:165px;width:9px;height:485px;background:#1a1a1a;border-radius:4px"></div>
<div class="a" style="left:1205px;top:538px;width:763px;height:23px;background:#0e4a5e;border-bottom:2px solid #1a6c7c"></div>
<div class="a" style="left:1252px;top:194px;width:1px;height:15px;background:#2a2a4a;"></div>
<div class="a" style="left:1252px;top:240px;width:1px;height:360px;background:#1c1c1c;"></div>
<div class="a" style="left:1268px;top:262px;width:1px;height:46px;background:#1c1c1c;"></div>
<div class="a" style="left:1268px;top:515px;width:1px;height:90px;background:#1c1c1c;"></div>
<div class="a" style="left:1252px;top:512px;width:2px;height:26px;background:#1a5562;"></div>
<svg style="left:1232px;top:179px" width="9" height="7"><path d="M0.5 0.5H8.5L4.5 6Z" fill="#5c5c5c"/></svg>
<svg style="left:1245px;top:171px" width="22" height="23"><rect x="2" y="2" width="19" height="20" fill="#5a5eb8"/><path d="M1 3V21H3V3Z" fill="#8a8ee0"/><path d="M3 1H19L21 3H3Z" fill="#8a8ee0"/></svg>
<div class="t" style="left:1273px;top:177.8px;font-size:11.5px;color:#9294dc;font-weight:normal;">DemoCreate</div>
<svg style="left:1462px;top:177px" width="16" height="10"><path d="M0.5 5Q8 -1.5 15.5 5Q8 11.5 0.5 5Z" fill="#e8e8e8"/><circle cx="8" cy="5" r="2.6" fill="#222"/></svg>
<svg style="left:1486px;top:175px" width="14" height="14"><circle cx="7" cy="7" r="5.8" fill="#000" stroke="#3a3a3a" stroke-width="1.2"/></svg>
<div class="a" style="left:1510px;top:176px;width:12px;height:13px;background:#000;border:1px solid #262626"></div>
<div class="a" style="left:1530px;top:172px;width:19px;height:20px;background:#151515;"></div>
<svg style="left:1268px;top:197px" width="17" height="17"><rect x="1" y="1" width="15" height="15" fill="#111" stroke="#c08090" stroke-width="1.5"/><rect x="4" y="5" width="8" height="2" fill="#8080e0"/><rect x="6" y="9" width="8" height="2" fill="#60c060"/></svg>
<div class="a" style="left:1267px;top:193px;width:1px;height:12px;background:#4a4a8a;"></div>
<div class="a" style="left:1267px;top:205px;width:4px;height:1px;background:#4a4a8a;"></div>
<div class="t" style="left:1291px;top:200.6px;font-size:11.5px;color:#dcb8bc;font-weight:normal;">Main Timeline</div>
<div class="a" style="left:1510px;top:199px;width:12px;height:13px;background:#000;border:1px solid #262626"></div>
<div class="a" style="left:1530px;top:195px;width:19px;height:20px;background:#151515;"></div>
<svg style="left:1249px;top:225px" width="9" height="7"><path d="M0.5 0.5H8.5L4.5 6Z" fill="#5c5c5c"/></svg>
<svg style="left:1264px;top:218px" width="19" height="20"><path d="M9.5 1L18 6H1Z" fill="#d89098"/><rect x="3" y="7" width="3" height="9" fill="#d89098"/><rect x="8" y="7" width="3" height="9" fill="#d89098"/><rect x="13" y="7" width="3" height="9" fill="#d89098"/><rect x="1" y="16" width="17" height="3" fill="#d89098"/></svg>
<div class="t" style="left:1291px;top:223.5px;font-size:11.5px;color:#dcb8bc;font-weight:normal;">Animation Bank</div>
<svg style="left:1462px;top:223px" width="16" height="10"><path d="M0.5 5Q8 -1.5 15.5 5Q8 11.5 0.5 5Z" fill="#e8e8e8"/><circle cx="8" cy="5" r="2.6" fill="#222"/></svg>
<svg style="left:1486px;top:221px" width="14" height="14"><circle cx="7" cy="7" r="5.8" fill="#000" stroke="#3a3a3a" stroke-width="1.2"/></svg>
<div class="a" style="left:1510px;top:222px;width:12px;height:13px;background:#000;border:1px solid #262626"></div>
<div class="a" style="left:1530px;top:218px;width:19px;height:20px;background:#151515;"></div>
<svg style="left:1265px;top:248px" width="9" height="7"><path d="M0.5 0.5H8.5L4.5 6Z" fill="#5c5c5c"/></svg>
<svg style="left:1280px;top:242px" width="18" height="18"><rect x="0" y="0" width="18" height="18" fill="#e4e4e4"/><path d="M6 15L9 3" stroke="#222" stroke-width="1.6"/><path d="M10 6L15 9L10 12Z" fill="#222"/></svg>
<div class="t" style="left:1307px;top:246.4px;font-size:11.5px;color:#dcb8bc;font-weight:normal;">Loop Fill Color Offset ...</div>
<svg style="left:1462px;top:246px" width="16" height="10"><path d="M0.5 5Q8 -1.5 15.5 5Q8 11.5 0.5 5Z" fill="#e8e8e8"/><circle cx="8" cy="5" r="2.6" fill="#222"/></svg>
<svg style="left:1486px;top:244px" width="14" height="14"><circle cx="7" cy="7" r="5.8" fill="#000" stroke="#3a3a3a" stroke-width="1.2"/></svg>
<div class="a" style="left:1510px;top:245px;width:12px;height:13px;background:#000;border:1px solid #262626"></div>
<div class="a" style="left:1530px;top:241px;width:19px;height:20px;background:#151515;"></div>
<svg style="left:1295px;top:265px" width="18" height="18"><circle cx="9" cy="9" r="8.5" fill="#c82828"/><path d="M4 5L14 13M14 5L4 13M9 1V17M1 9H17" stroke="#a01818" stroke-width="0.8"/></svg>
<div class="t" style="left:1322px;top:269.2px;font-size:11.5px;color:#dc6870;font-weight:normal;">Fill Color Offset -&gt; Y</div>
<svg style="left:1462px;top:269px" width="16" height="10"><path d="M0.5 5Q8 -1.5 15.5 5Q8 11.5 0.5 5Z" fill="#e8e8e8"/><circle cx="8" cy="5" r="2.6" fill="#222"/></svg>
<svg style="left:1486px;top:267px" width="14" height="14"><circle cx="7" cy="7" r="5.8" fill="#000" stroke="#3a3a3a" stroke-width="1.2"/></svg>
<div class="a" style="left:1510px;top:268px;width:12px;height:13px;background:#000;border:1px solid #262626"></div>
<div class="a" style="left:1530px;top:264px;width:19px;height:20px;background:#151515;"></div>
<svg style="left:1266px;top:292.5px" width="7" height="9"><path d="M0.5 0.5V8.5L6.5 4.5Z" fill="#4a4a4a"/></svg>
<svg style="left:1280px;top:288px" width="18" height="18"><rect x="0" y="0" width="18" height="18" fill="#e4e4e4"/><path d="M6 15L9 3" stroke="#222" stroke-width="1.6"/><path d="M10 6L15 9L10 12Z" fill="#222"/></svg>
<div class="t" style="left:1307px;top:292.1px;font-size:11.5px;color:#dcb8bc;font-weight:normal;">Loop Point Rotate An...</div>
<svg style="left:1462px;top:292px" width="16" height="10"><path d="M0.5 5Q8 -1.5 15.5 5Q8 11.5 0.5 5Z" fill="#e8e8e8"/><circle cx="8" cy="5" r="2.6" fill="#222"/></svg>
<svg style="left:1486px;top:290px" width="14" height="14"><circle cx="7" cy="7" r="5.8" fill="#000" stroke="#3a3a3a" stroke-width="1.2"/></svg>
<div class="a" style="left:1510px;top:291px;width:12px;height:13px;background:#000;border:1px solid #262626"></div>
<div class="a" style="left:1530px;top:287px;width:19px;height:20px;background:#151515;"></div>
<svg style="left:1250px;top:315.5px" width="7" height="9"><path d="M0.5 0.5V8.5L6.5 4.5Z" fill="#4a4a4a"/></svg>
<svg style="left:1264px;top:310px" width="19" height="20"><path d="M9.5 1L18 6H1Z" fill="#e89040"/><rect x="3" y="7" width="3" height="9" fill="#e89040"/><rect x="8" y="7" width="3" height="9" fill="#e89040"/><rect x="13" y="7" width="3" height="9" fill="#e89040"/><rect x="1" y="16" width="17" height="3" fill="#e89040"/></svg>
<div class="t" style="left:1291px;top:315.0px;font-size:11.5px;color:#e8a458;font-weight:normal;">Material Bank</div>
<svg style="left:1462px;top:315px" width="16" height="10"><path d="M0.5 5Q8 -1.5 15.5 5Q8 11.5 0.5 5Z" fill="#e8e8e8"/><circle cx="8" cy="5" r="2.6" fill="#222"/></svg>
<svg style="left:1486px;top:313px" width="14" height="14"><circle cx="7" cy="7" r="5.8" fill="#000" stroke="#3a3a3a" stroke-width="1.2"/></svg>
<div class="a" style="left:1510px;top:314px;width:12px;height:13px;background:#000;border:1px solid #262626"></div>
<div class="a" style="left:1530px;top:310px;width:19px;height:20px;background:#151515;"></div>
<svg style="left:1262px;top:335px" width="22" height="16"><rect x="0" y="1" width="22" height="14" fill="#d8d8d8"/><rect x="2" y="3" width="11" height="10" fill="#d83040"/><path d="M15 8L21 3V13Z" fill="#888"/></svg>
<div class="t" style="left:1291px;top:337.8px;font-size:11.5px;color:#d4d4d4;font-weight:normal;">Orthographic Camera</div>
<svg style="left:1462px;top:338px" width="16" height="10"><path d="M0.5 5Q8 -1.5 15.5 5Q8 11.5 0.5 5Z" fill="#e8e8e8"/><circle cx="8" cy="5" r="2.6" fill="#222"/></svg>
<svg style="left:1486px;top:336px" width="14" height="14"><circle cx="7" cy="7" r="5.8" fill="#000" stroke="#3a3a3a" stroke-width="1.2"/></svg>
<div class="a" style="left:1510px;top:337px;width:12px;height:13px;background:#000;border:1px solid #262626"></div>
<div class="a" style="left:1530px;top:333px;width:19px;height:20px;background:#151515;"></div>
<svg style="left:1250px;top:361.5px" width="7" height="9"><path d="M0.5 0.5V8.5L6.5 4.5Z" fill="#4a4a4a"/></svg>
<svg style="left:1262px;top:355px" width="22" height="22"><circle cx="11" cy="11" r="5" fill="#f0f0f0"/><path d="M11 1V4M11 18V21M1 11H4M18 11H21M4 4L6 6M16 16L18 18M18 4L16 6M4 18L6 16" stroke="#ddd" stroke-width="1.4"/></svg>
<div class="t" style="left:1291px;top:360.7px;font-size:11.5px;color:#e2e2e2;font-weight:normal;">Environment Light cape...</div>
<svg style="left:1462px;top:361px" width="16" height="10"><path d="M0.5 5Q8 -1.5 15.5 5Q8 11.5 0.5 5Z" fill="#e8e8e8"/><circle cx="8" cy="5" r="2.6" fill="#222"/></svg>
<svg style="left:1486px;top:359px" width="14" height="14"><circle cx="7" cy="7" r="5.8" fill="#000" stroke="#3a3a3a" stroke-width="1.2"/></svg>
<div class="a" style="left:1510px;top:360px;width:12px;height:13px;background:#000;border:1px solid #262626"></div>
<div class="a" style="left:1530px;top:356px;width:19px;height:20px;background:#151515;"></div>
<svg style="left:1262px;top:378px" width="22" height="22"><circle cx="9" cy="11" r="4.5" fill="#f0f0f0"/><path d="M9 11H20" stroke="#f0f0f0" stroke-width="2.2"/><path d="M9 1V4M9 18V21M1 11H3M3 4L5 6M3 18L5 16M15 4L13 6M15 18L13 16" stroke="#ddd" stroke-width="1.4"/></svg>
<div class="t" style="left:1291px;top:383.6px;font-size:11.5px;color:#e2e2e2;font-weight:normal;">Directional Light</div>
<svg style="left:1462px;top:384px" width="16" height="10"><path d="M0.5 5Q8 -1.5 15.5 5Q8 11.5 0.5 5Z" fill="#e8e8e8"/><circle cx="8" cy="5" r="2.6" fill="#222"/></svg>
<svg style="left:1486px;top:382px" width="14" height="14"><circle cx="7" cy="7" r="5.8" fill="#000" stroke="#3a3a3a" stroke-width="1.2"/></svg>
<div class="a" style="left:1510px;top:383px;width:12px;height:13px;background:#000;border:1px solid #262626"></div>
<div class="a" style="left:1530px;top:379px;width:19px;height:20px;background:#151515;"></div>
<svg style="left:1250px;top:407.5px" width="7" height="9"><path d="M0.5 0.5V8.5L6.5 4.5Z" fill="#4a4a4a"/></svg>
<svg style="left:1262px;top:402px" width="21" height="21"><rect x="0" y="0" width="21" height="21" fill="#8a90e0"/><circle cx="10.5" cy="10.5" r="7.5" fill="#3a48a0"/></svg>
<div class="t" style="left:1291px;top:406.5px;font-size:11.5px;color:#a0a2e8;font-weight:normal;">Radial Gradient</div>
<svg style="left:1462px;top:407px" width="16" height="10"><path d="M0.5 5Q8 -1.5 15.5 5Q8 11.5 0.5 5Z" fill="#e8e8e8"/><circle cx="8" cy="5" r="2.6" fill="#222"/></svg>
<svg style="left:1486px;top:405px" width="14" height="14"><circle cx="7" cy="7" r="5.8" fill="#000" stroke="#3a3a3a" stroke-width="1.2"/></svg>
<div class="a" style="left:1510px;top:406px;width:12px;height:13px;background:#000;border:1px solid #262626"></div>
<div class="a" style="left:1530px;top:402px;width:19px;height:20px;background:#151515;"></div>
<svg style="left:1250px;top:430.5px" width="7" height="9"><path d="M0.5 0.5V8.5L6.5 4.5Z" fill="#4a4a4a"/></svg>
<svg style="left:1262px;top:425px" width="21" height="21"><rect x="0" y="0" width="21" height="21" rx="2" fill="#c07828"/><path d="M10.5 3L17 6.5V14.5L10.5 18L4 14.5V6.5Z" fill="#f0d8a0"/><path d="M4 6.5L10.5 10L17 6.5M10.5 10V18" stroke="#c07828" stroke-width="1"/></svg>
<div class="t" style="left:1291px;top:429.3px;font-size:11.5px;color:#e8c478;font-weight:normal;">Box</div>
<svg style="left:1462px;top:430px" width="16" height="10"><path d="M0.5 5Q8 -1.5 15.5 5Q8 11.5 0.5 5Z" fill="#e8e8e8"/><circle cx="8" cy="5" r="2.6" fill="#222"/></svg>
<svg style="left:1486px;top:428px" width="14" height="14"><circle cx="7" cy="7" r="5.8" fill="#000" stroke="#3a3a3a" stroke-width="1.2"/></svg>
<div class="a" style="left:1510px;top:429px;width:12px;height:13px;background:#000;border:1px solid #262626"></div>
<div class="a" style="left:1530px;top:425px;width:19px;height:20px;background:#151515;"></div>
<svg style="left:1250px;top:453.5px" width="7" height="9"><path d="M0.5 0.5V8.5L6.5 4.5Z" fill="#4a4a4a"/></svg>
<svg style="left:1262px;top:448px" width="21" height="21"><rect x="1" y="1" width="19" height="19" fill="#4878a8" stroke="#9cc8e8" stroke-width="1.2"/><circle cx="10.5" cy="10.5" r="6" fill="none" stroke="#d0e4f4" stroke-width="1.5"/></svg>
<div class="t" style="left:1291px;top:452.2px;font-size:11.5px;color:#dce4ea;font-weight:normal;">Circle</div>
<svg style="left:1462px;top:453px" width="16" height="10"><path d="M0.5 5Q8 -1.5 15.5 5Q8 11.5 0.5 5Z" fill="#e8e8e8"/><circle cx="8" cy="5" r="2.6" fill="#222"/></svg>
<svg style="left:1486px;top:451px" width="14" height="14"><circle cx="7" cy="7" r="5.8" fill="#000" stroke="#3a3a3a" stroke-width="1.2"/></svg>
<div class="a" style="left:1510px;top:452px;width:12px;height:13px;background:#000;border:1px solid #262626"></div>
<div class="a" style="left:1530px;top:448px;width:19px;height:20px;background:#151515;"></div>
<svg style="left:1250px;top:476.5px" width="7" height="9"><path d="M0.5 0.5V8.5L6.5 4.5Z" fill="#4a4a4a"/></svg>
<svg style="left:1262px;top:471px" width="21" height="21"><rect x="0" y="0" width="21" height="21" fill="#a06018"/><circle cx="5" cy="5" r="1.6" fill="#f8c848"/><circle cx="14" cy="4" r="1.6" fill="#f8c848"/><circle cx="9" cy="10" r="1.6" fill="#f8c848"/><circle cx="16" cy="13" r="1.6" fill="#f8c848"/><circle cx="5" cy="15" r="1.6" fill="#f8c848"/><circle cx="12" cy="17" r="1.6" fill="#f8c848"/></svg>
<div class="t" style="left:1291px;top:475.1px;font-size:11.5px;color:#e4cc7c;font-weight:normal;">Random Points</div>
<svg style="left:1462px;top:476px" width="16" height="10"><path d="M0.5 5Q8 -1.5 15.5 5Q8 11.5 0.5 5Z" fill="#e8e8e8"/><circle cx="8" cy="5" r="2.6" fill="#222"/></svg>
<svg style="left:1486px;top:474px" width="14" height="14"><circle cx="7" cy="7" r="5.8" fill="#000" stroke="#3a3a3a" stroke-width="1.2"/></svg>
<div class="a" style="left:1510px;top:475px;width:12px;height:13px;background:#000;border:1px solid #262626"></div>
<div class="a" style="left:1530px;top:471px;width:19px;height:20px;background:#151515;"></div>
<svg style="left:1249px;top:501px" width="9" height="7"><path d="M0.5 0.5H8.5L4.5 6Z" fill="#5c5c5c"/></svg>
<svg style="left:1261px;top:492px" width="23" height="23"><rect x="2" y="2" width="19" height="19" fill="#3a6890" stroke="#78b0d8" stroke-width="1.4"/><circle cx="2" cy="2" r="1.6" fill="#9cd0f0"/><circle cx="21" cy="2" r="1.6" fill="#9cd0f0"/><circle cx="2" cy="21" r="1.6" fill="#9cd0f0"/><circle cx="21" cy="21" r="1.6" fill="#9cd0f0"/></svg>
<div class="t" style="left:1291px;top:497.9px;font-size:11.5px;color:#d4dce2;font-weight:normal;">Group of shapes</div>
<svg style="left:1462px;top:499px" width="16" height="10"><path d="M0.5 5Q8 -1.5 15.5 5Q8 11.5 0.5 5Z" fill="#e8e8e8"/><circle cx="8" cy="5" r="2.6" fill="#222"/></svg>
<svg style="left:1486px;top:497px" width="14" height="14"><circle cx="7" cy="7" r="5.8" fill="#000" stroke="#3a3a3a" stroke-width="1.2"/></svg>
<div class="a" style="left:1510px;top:498px;width:12px;height:13px;background:#000;border:1px solid #262626"></div>
<div class="a" style="left:1530px;top:494px;width:19px;height:20px;background:#151515;"></div>
<svg style="left:1278px;top:516px" width="21" height="22"><rect x="1.5" y="1.5" width="18" height="19" fill="#2e5a80" stroke="#78b0d8" stroke-width="1.2"/><path d="M4 14Q8 4 10 10T17 8" fill="none" stroke="#a8d4f0" stroke-width="1.2"/><circle cx="1.5" cy="1.5" r="1.4" fill="#9cd0f0"/><circle cx="19.5" cy="1.5" r="1.4" fill="#9cd0f0"/><circle cx="1.5" cy="20.5" r="1.4" fill="#9cd0f0"/><circle cx="19.5" cy="20.5" r="1.4" fill="#9cd0f0"/></svg>
<div class="t" style="left:1307px;top:520.8px;font-size:11.5px;color:#eceff0;font-weight:normal;">Bezier</div>
<svg style="left:1462px;top:522px" width="16" height="10"><path d="M0.5 5Q8 -1.5 15.5 5Q8 11.5 0.5 5Z" fill="#e8e8e8"/><circle cx="8" cy="5" r="2.6" fill="#222"/></svg>
<svg style="left:1486px;top:520px" width="14" height="14"><circle cx="7" cy="7" r="5.8" fill="#000" stroke="#3a3a3a" stroke-width="1.2"/></svg>
<div class="a" style="left:1510px;top:521px;width:12px;height:13px;background:#000;border:1px solid #262626"></div>
<div class="a" style="left:1530px;top:517px;width:19px;height:20px;background:#151515;"></div>
<svg style="left:1265px;top:547px" width="9" height="7"><path d="M0.5 0.5H8.5L4.5 6Z" fill="#5c5c5c"/></svg>
<svg style="left:1278px;top:539px" width="21" height="22"><rect x="1.5" y="1.5" width="18" height="19" fill="#2e5a80" stroke="#78b0d8" stroke-width="1.2"/><path d="M4 14Q8 4 10 10T17 8" fill="none" stroke="#a8d4f0" stroke-width="1.2"/><circle cx="1.5" cy="1.5" r="1.4" fill="#9cd0f0"/><circle cx="19.5" cy="1.5" r="1.4" fill="#9cd0f0"/><circle cx="1.5" cy="20.5" r="1.4" fill="#9cd0f0"/><circle cx="19.5" cy="20.5" r="1.4" fill="#9cd0f0"/></svg>
<div class="t" style="left:1307px;top:543.7px;font-size:11.5px;color:#eceff0;font-weight:normal;">Bezier</div>
<svg style="left:1462px;top:545px" width="16" height="10"><path d="M0.5 5Q8 -1.5 15.5 5Q8 11.5 0.5 5Z" fill="#e8e8e8"/><circle cx="8" cy="5" r="2.6" fill="#222"/></svg>
<svg style="left:1486px;top:543px" width="14" height="14"><circle cx="7" cy="7" r="5.5" fill="#000"/></svg>
<div class="a" style="left:1510px;top:544px;width:12px;height:13px;background:#000;border:1px solid #262626"></div>
<div class="a" style="left:1530px;top:540px;width:19px;height:20px;background:#1a5568;"></div>
<svg style="left:1294px;top:562px" width="21" height="22"><path d="M1.5 3Q10.5 0 19.5 3V19Q10.5 22 1.5 19Z" fill="#2e5a80" stroke="#78b0d8" stroke-width="1.2"/><rect x="6" y="7" width="9" height="8" fill="none" stroke="#a8d4f0" stroke-width="1"/></svg>
<div class="t" style="left:1323px;top:566.5px;font-size:11.5px;color:#dce2e4;font-weight:normal;">Stroke</div>
<svg style="left:1462px;top:568px" width="16" height="10"><path d="M0.5 5Q8 -1.5 15.5 5Q8 11.5 0.5 5Z" fill="#e8e8e8"/><circle cx="8" cy="5" r="2.6" fill="#222"/></svg>
<svg style="left:1486px;top:566px" width="14" height="14"><circle cx="7" cy="7" r="5.8" fill="#000" stroke="#3a3a3a" stroke-width="1.2"/></svg>
<div class="a" style="left:1510px;top:567px;width:12px;height:13px;background:#000;border:1px solid #262626"></div>
<div class="a" style="left:1530px;top:563px;width:19px;height:20px;background:#151515;"></div>
<svg style="left:1266px;top:591.5px" width="7" height="9"><path d="M0.5 0.5V8.5L6.5 4.5Z" fill="#4a4a4a"/></svg>
<svg style="left:1278px;top:585px" width="21" height="22"><path d="M1.5 3Q10.5 0 19.5 3V19Q10.5 22 1.5 19Z" fill="#2e5a80" stroke="#78b0d8" stroke-width="1.2"/><path d="M3 11Q7 7 10.5 11T18 11" fill="none" stroke="#d0ecff" stroke-width="2.2"/></svg>
<div class="t" style="left:1307px;top:589.4px;font-size:11.5px;color:#dce2e4;font-weight:normal;">Sinus</div>
<svg style="left:1462px;top:591px" width="16" height="10"><path d="M0.5 5Q8 -1.5 15.5 5Q8 11.5 0.5 5Z" fill="#e8e8e8"/><circle cx="8" cy="5" r="2.6" fill="#222"/></svg>
<svg style="left:1486px;top:589px" width="14" height="14"><circle cx="7" cy="7" r="5.8" fill="#000" stroke="#3a3a3a" stroke-width="1.2"/></svg>
<div class="a" style="left:1510px;top:590px;width:12px;height:13px;background:#000;border:1px solid #262626"></div>
<div class="a" style="left:1530px;top:586px;width:19px;height:20px;background:#151515;"></div>
<svg style="left:1208px;top:173px" width="17" height="18"><path d="M1 9L11 1V17Z" fill="#58d8a0"/><path d="M9 4H16V14H9Z" fill="#58d8a0"/></svg>
<svg style="left:1208px;top:358px" width="12" height="16"><path d="M1 8L11 1V15Z" fill="#102a28"/></svg>
<svg style="left:1208px;top:381px" width="12" height="16"><path d="M1 8L11 1V15Z" fill="#102a28"/></svg>
<svg style="left:1208px;top:404px" width="12" height="16"><path d="M1 8L11 1V15Z" fill="#102a28"/></svg>
<svg style="left:1208px;top:427px" width="12" height="16"><path d="M1 8L11 1V15Z" fill="#102a28"/></svg>
<svg style="left:1208px;top:473px" width="12" height="16"><path d="M1 8L11 1V15Z" fill="#102a28"/></svg>
<div class="t" style="left:1558px;top:199.5px;font-size:11px;color:#d8d8d8;font-weight:normal;">0...</div>
<div class="a" style="left:1590.0px;top:194px;width:23px;height:22px;background:#1a1a1a;border:1px solid #262626;border-radius:3px"></div>
<svg style="left:1590.0px;top:194px" width="23" height="22"><rect x="6" y="6" width="2.5" height="10" fill="#f0f0f0"/><path d="M17 6V16L9 11Z" fill="#f0f0f0"/></svg>
<div class="a" style="left:1614.7px;top:194px;width:23px;height:22px;background:#1a1a1a;border:1px solid #262626;border-radius:3px"></div>
<svg style="left:1614.7px;top:194px" width="23" height="22"><rect x="7" y="6" width="3" height="10" fill="#f0f0f0"/><rect x="12.5" y="6" width="3" height="10" fill="#f0f0f0"/></svg>
<div class="a" style="left:1639.4px;top:194px;width:23px;height:22px;background:#1a1a1a;border:1px solid #262626;border-radius:3px"></div>
<svg style="left:1639.4px;top:194px" width="23" height="22"><path d="M7 5.5V16.5L17 11Z" fill="#f0f0f0"/></svg>
<div class="a" style="left:1664.1px;top:194px;width:23px;height:22px;background:#1a1a1a;border:1px solid #262626;border-radius:3px"></div>
<svg style="left:1664.1px;top:194px" width="23" height="22"><rect x="14.5" y="6" width="2.5" height="10" fill="#f0f0f0"/><path d="M6 6V16L14 11Z" fill="#f0f0f0"/></svg>
<div class="a" style="left:1688.8px;top:194px;width:23px;height:22px;background:#1a1a1a;border:1px solid #262626;border-radius:3px"></div>
<svg style="left:1688.8px;top:194px" width="23" height="22"><path d="M4 11H18L15 8H12V11" fill="#f0f0f0" stroke="#f0f0f0" stroke-width="1.5"/></svg>
<div class="t" style="left:1720px;top:199.5px;font-size:11px;color:#8a8a8a;font-weight:normal;">x 1</div>
<svg style="left:1763px;top:197px" width="10" height="16"><path d="M1 6.5L5 1.5L9 6.5Z M1 9.5L5 14.5L9 9.5Z" fill="#6a6a6a"/></svg>
<div class="a" style="left:1551px;top:241px;width:35px;height:20px;background:#08262e;border:1px solid #0e4656"></div>
<div class="t" style="left:1557px;top:245.5px;font-size:11px;color:#b8c8cc;font-weight:normal;">0...</div>
<div class="a" style="left:1590.0px;top:240px;width:23px;height:22px;background:#1a1a1a;border:1px solid #262626;border-radius:3px"></div>
<svg style="left:1590.0px;top:240px" width="23" height="22"><rect x="6" y="6" width="2.5" height="10" fill="#f0f0f0"/><path d="M17 6V16L9 11Z" fill="#f0f0f0"/></svg>
<div class="a" style="left:1614.7px;top:240px;width:23px;height:22px;background:#1a1a1a;border:1px solid #262626;border-radius:3px"></div>
<svg style="left:1614.7px;top:240px" width="23" height="22"><rect x="7" y="6" width="3" height="10" fill="#f0f0f0"/><rect x="12.5" y="6" width="3" height="10" fill="#f0f0f0"/></svg>
<div class="a" style="left:1639.4px;top:240px;width:23px;height:22px;background:#1a1a1a;border:1px solid #262626;border-radius:3px"></div>
<svg style="left:1639.4px;top:240px" width="23" height="22"><path d="M7 5.5V16.5L17 11Z" fill="#f0f0f0"/></svg>
<div class="a" style="left:1664.1px;top:240px;width:23px;height:22px;background:#1a1a1a;border:1px solid #262626;border-radius:3px"></div>
<svg style="left:1664.1px;top:240px" width="23" height="22"><rect x="14.5" y="6" width="2.5" height="10" fill="#f0f0f0"/><path d="M6 6V16L14 11Z" fill="#f0f0f0"/></svg>
<div class="a" style="left:1688.8px;top:240px;width:23px;height:22px;background:#1a1a1a;border:1px solid #262626;border-radius:3px"></div>
<svg style="left:1688.8px;top:240px" width="23" height="22"><path d="M8 7A5.5 5.5 0 1 0 11.5 5.5" fill="none" stroke="#f0f0f0" stroke-width="2"/><path d="M6 4.5L11 4.5L8 9Z" fill="#f0f0f0"/></svg>
<div class="t" style="left:1720px;top:245.5px;font-size:11px;color:#8a8a8a">x <span style="color:#e05858">2.77</span></div>
<svg style="left:1763px;top:243px" width="10" height="16"><path d="M1 6.5L5 1.5L9 6.5Z M1 9.5L5 14.5L9 9.5Z" fill="#6a6a6a"/></svg>
<div class="t" style="left:1558px;top:269.0px;font-size:10px;color:#484848;font-weight:normal;letter-spacing:0.45px">2D Layer -&gt; Checker Board -&gt; Offset -&gt; Y</div>
<div class="a" style="left:1551px;top:287px;width:35px;height:20px;background:#08262e;border:1px solid #0e4656"></div>
<div class="a" style="left:1576px;top:289px;width:8px;height:16px;background:#050a0c;"></div>
<div class="t" style="left:1557px;top:291.5px;font-size:11px;color:#b8c8cc;font-weight:normal;">0...</div>
<div class="a" style="left:1590.0px;top:286px;width:23px;height:22px;background:#1a1a1a;border:1px solid #262626;border-radius:3px"></div>
<svg style="left:1590.0px;top:286px" width="23" height="22"><rect x="6" y="6" width="2.5" height="10" fill="#f0f0f0"/><path d="M17 6V16L9 11Z" fill="#f0f0f0"/></svg>
<div class="a" style="left:1614.7px;top:286px;width:23px;height:22px;background:#1a1a1a;border:1px solid #262626;border-radius:3px"></div>
<svg style="left:1614.7px;top:286px" width="23" height="22"><rect x="7" y="6" width="3" height="10" fill="#f0f0f0"/><rect x="12.5" y="6" width="3" height="10" fill="#f0f0f0"/></svg>
<div class="a" style="left:1639.4px;top:286px;width:23px;height:22px;background:#1a1a1a;border:1px solid #262626;border-radius:3px"></div>
<svg style="left:1639.4px;top:286px" width="23" height="22"><path d="M7 5.5V16.5L17 11Z" fill="#f0f0f0"/></svg>
<div class="a" style="left:1664.1px;top:286px;width:23px;height:22px;background:#1a1a1a;border:1px solid #262626;border-radius:3px"></div>
<svg style="left:1664.1px;top:286px" width="23" height="22"><rect x="14.5" y="6" width="2.5" height="10" fill="#f0f0f0"/><path d="M6 6V16L14 11Z" fill="#f0f0f0"/></svg>
<div class="a" style="left:1688.8px;top:286px;width:23px;height:22px;background:#1a1a1a;border:1px solid #262626;border-radius:3px"></div>
<svg style="left:1688.8px;top:286px" width="23" height="22"><path d="M8 7A5.5 5.5 0 1 0 11.5 5.5" fill="none" stroke="#f0f0f0" stroke-width="2"/><path d="M6 4.5L11 4.5L8 9Z" fill="#f0f0f0"/></svg>
<div class="t" style="left:1720px;top:291.5px;font-size:11px;color:#8a8a8a">x <span style="color:#c83838">0.1</span></div>
<svg style="left:1763px;top:289px" width="10" height="16"><path d="M1 6.5L5 1.5L9 6.5Z M1 9.5L5 14.5L9 9.5Z" fill="#6a6a6a"/></svg>
<div class="a" style="left:1553px;top:333px;width:221px;height:21px;background:#272727;border-radius:4px;border:1px solid #2e2e2e"></div>
<svg style="left:1648px;top:335px" width="16" height="16"><circle cx="8" cy="8" r="6.5" fill="#1e1e1e" stroke="#aaa" stroke-width="1.4"/><circle cx="8" cy="8" r="2" fill="#666"/></svg>
<div class="t" style="left:1664px;top:338.5px;font-size:9px;color:#c8c8c8;font-weight:bold;">Edit</div>
<div class="a" style="left:1553px;top:357px;width:221px;height:20px;background:#1c1c1c;border-radius:2px"></div>
<div class="t" style="left:1558px;top:361.5px;font-size:11px;color:#d8d8d8;font-weight:normal;letter-spacing:0.45px">100.000 %</div>
<svg style="left:1760px;top:359px" width="10" height="16"><path d="M1 6.5L5 1.5L9 6.5Z M1 9.5L5 14.5L9 9.5Z" fill="#5a5a5a"/></svg>
<div class="a" style="left:1553px;top:380px;width:221px;height:20px;background:#1c1c1c;border-radius:2px"></div>
<div class="t" style="left:1558px;top:384.5px;font-size:11px;color:#d8d8d8;font-weight:normal;letter-spacing:0.45px">100.000 %</div>
<svg style="left:1760px;top:382px" width="10" height="16"><path d="M1 6.5L5 1.5L9 6.5Z M1 9.5L5 14.5L9 9.5Z" fill="#5a5a5a"/></svg>
<div class="a" style="left:1553px;top:402px;width:107px;height:20px;background:#1c1c1c;border-radius:2px"></div>
<div class="t" style="left:1558px;top:406.5px;font-size:11px;color:#d8d8d8;font-weight:normal;letter-spacing:0.45px">100.000 %</div>
<svg style="left:1646px;top:404px" width="10" height="16"><path d="M1 6.5L5 1.5L9 6.5Z M1 9.5L5 14.5L9 9.5Z" fill="#5a5a5a"/></svg>
<div class="a" style="left:1664px;top:402px;width:111px;height:20px;background:#0e0e0e;border:1px solid #262626"></div>
<div class="t" style="left:1669px;top:406.5px;font-size:11px;color:#e0e0e0;font-weight:normal;letter-spacing:0.45px">Normal</div>
<div class="a" style="left:1759px;top:402px;width:16px;height:20px;background:#8c8c8c;border-radius:1px"></div>
<svg style="left:1763px;top:406px" width="8" height="12"><path d="M1 5L4 1.5L7 5Z M1 7L4 10.5L7 7Z" fill="#333"/></svg>
<div class="a" style="left:1553px;top:425px;width:107px;height:20px;background:#0e0e0e;border:1px solid #262626"></div>
<div class="t" style="left:1558px;top:429.5px;font-size:11px;color:#e0e0e0;font-weight:normal;letter-spacing:0.45px">Box</div>
<div class="a" style="left:1644px;top:425px;width:16px;height:20px;background:#8c8c8c;border-radius:1px"></div>
<svg style="left:1648px;top:429px" width="8" height="12"><path d="M1 5L4 1.5L7 5Z M1 7L4 10.5L7 7Z" fill="#333"/></svg>
<div class="a" style="left:1664px;top:425px;width:86px;height:20px;background:#0e0e0e;border:1px solid #262626"></div>
<div class="t" style="left:1669px;top:429.5px;font-size:11px;color:#e0e0e0;font-weight:normal;letter-spacing:0.45px">Group 3...</div>
<div class="a" style="left:1734px;top:425px;width:16px;height:20px;background:#8c8c8c;border-radius:1px"></div>
<svg style="left:1738px;top:429px" width="8" height="12"><path d="M1 5L4 1.5L7 5Z M1 7L4 10.5L7 7Z" fill="#333"/></svg>
<div class="a" style="left:1753px;top:343px;width:0px;height:0px;background:#000;"></div>
<div class="a" style="left:1753px;top:424px;width:21px;height:21px;background:#1e1e1e;border:1px solid #2a2a2a;border-radius:3px"></div>
<div class="a" style="left:1759px;top:430px;width:9px;height:9px;background:#c88828;"></div>
<div class="a" style="left:1553px;top:448px;width:107px;height:20px;background:#1c1c1c;border-radius:2px"></div>
<div class="t" style="left:1558px;top:452.5px;font-size:11px;color:#d8d8d8;font-weight:normal;letter-spacing:0.45px">100.000 %</div>
<svg style="left:1646px;top:450px" width="10" height="16"><path d="M1 6.5L5 1.5L9 6.5Z M1 9.5L5 14.5L9 9.5Z" fill="#5a5a5a"/></svg>
<div class="a" style="left:1664px;top:448px;width:111px;height:20px;background:#0e0e0e;border:1px solid #262626"></div>
<div class="t" style="left:1669px;top:452.5px;font-size:11px;color:#e0e0e0;font-weight:normal;letter-spacing:0.45px">Normal</div>
<div class="a" style="left:1759px;top:448px;width:16px;height:20px;background:#8c8c8c;border-radius:1px"></div>
<svg style="left:1763px;top:452px" width="8" height="12"><path d="M1 5L4 1.5L7 5Z M1 7L4 10.5L7 7Z" fill="#333"/></svg>
<div class="a" style="left:1553px;top:471px;width:107px;height:20px;background:#0e0e0e;border:1px solid #262626"></div>
<div class="t" style="left:1558px;top:475.5px;font-size:11px;color:#e0e0e0;font-weight:normal;letter-spacing:0.45px">Random Points</div>
<div class="a" style="left:1644px;top:471px;width:16px;height:20px;background:#8c8c8c;border-radius:1px"></div>
<svg style="left:1648px;top:475px" width="8" height="12"><path d="M1 5L4 1.5L7 5Z M1 7L4 10.5L7 7Z" fill="#333"/></svg>
<div class="a" style="left:1664px;top:471px;width:111px;height:20px;background:#0e0e0e;border:1px solid #262626"></div>
<div class="t" style="left:1669px;top:475.5px;font-size:11px;color:#e0e0e0;font-weight:normal;letter-spacing:0.45px">Box Default ...</div>
<div class="a" style="left:1759px;top:471px;width:16px;height:20px;background:#8c8c8c;border-radius:1px"></div>
<svg style="left:1763px;top:475px" width="8" height="12"><path d="M1 5L4 1.5L7 5Z M1 7L4 10.5L7 7Z" fill="#333"/></svg>
<div class="a" style="left:1553px;top:494px;width:107px;height:20px;background:#1c1c1c;border-radius:2px"></div>
<div class="t" style="left:1558px;top:498.5px;font-size:11px;color:#d8d8d8;font-weight:normal;letter-spacing:0.45px">100.000 %</div>
<svg style="left:1646px;top:496px" width="10" height="16"><path d="M1 6.5L5 1.5L9 6.5Z M1 9.5L5 14.5L9 9.5Z" fill="#5a5a5a"/></svg>
<div class="a" style="left:1664px;top:494px;width:111px;height:20px;background:#0e0e0e;border:1px solid #262626"></div>
<div class="t" style="left:1669px;top:498.5px;font-size:11px;color:#e0e0e0;font-weight:normal;letter-spacing:0.45px">Normal</div>
<div class="a" style="left:1759px;top:494px;width:16px;height:20px;background:#8c8c8c;border-radius:1px"></div>
<svg style="left:1763px;top:498px" width="8" height="12"><path d="M1 5L4 1.5L7 5Z M1 7L4 10.5L7 7Z" fill="#333"/></svg>
<div class="a" style="left:1553px;top:516px;width:107px;height:21px;background:#0c0c0c;border:1px solid #1c1c1c"></div>
<div class="t" style="left:1558px;top:520.5px;font-size:11px;color:#5a5a5a;font-weight:normal;">Pass Through</div>
<div class="a" style="left:1645px;top:516px;width:16px;height:21px;background:#5a5a5a;"></div>
<div class="a" style="left:1664px;top:516px;width:111px;height:21px;background:#161616;"></div>
<div class="t" style="left:1669px;top:520.5px;font-size:11px;color:#4a4a4a;font-weight:normal;">100.000 %</div>
<div class="a" style="left:1553px;top:539px;width:107px;height:21px;background:#0d4658;border:1px solid #0e3a48"></div>
<div class="t" style="left:1558px;top:543.5px;font-size:11px;color:#c8dee4;font-weight:normal;">Pass Through</div>
<div class="a" style="left:1645px;top:539px;width:16px;height:21px;background:#8c8c8c;"></div>
<svg style="left:1649px;top:543px" width="8" height="12"><path d="M1 5L4 1.5L7 5Z M1 7L4 10.5L7 7Z" fill="#333"/></svg>
<div class="a" style="left:1664px;top:539px;width:111px;height:21px;background:#14586c;"></div>
<div class="t" style="left:1669px;top:543.5px;font-size:11px;color:#4a98a8;font-weight:normal;">100.000 %</div>
<div class="t" style="left:1558px;top:566.5px;font-size:11px;color:#d8d8d8;font-weight:normal;">0 px</div>
<svg style="left:1648px;top:564px" width="10" height="16"><path d="M1 6.5L5 1.5L9 6.5Z M1 9.5L5 14.5L9 9.5Z" fill="#4a4a4a"/></svg>
<div class="a" style="left:1664px;top:563px;width:40px;height:19px;background:#1a1a1a;"></div>
<div class="t" style="left:1668px;top:566.5px;font-size:11px;color:#d8d8d8;font-weight:normal;">65.700 %</div>
<svg style="left:1760px;top:564px" width="10" height="16"><path d="M1 6.5L5 1.5L9 6.5Z M1 9.5L5 14.5L9 9.5Z" fill="#4a4a4a"/></svg>
<div class="a" style="left:1553px;top:586px;width:107px;height:20px;background:#1c1c1c;border-radius:2px"></div>
<div class="t" style="left:1558px;top:590.5px;font-size:11px;color:#d8d8d8;font-weight:normal;letter-spacing:0.45px">100.000 %</div>
<svg style="left:1646px;top:588px" width="10" height="16"><path d="M1 6.5L5 1.5L9 6.5Z M1 9.5L5 14.5L9 9.5Z" fill="#5a5a5a"/></svg>
<div class="a" style="left:1664px;top:586px;width:111px;height:20px;background:#0e0e0e;border:1px solid #262626"></div>
<div class="t" style="left:1669px;top:590.5px;font-size:11px;color:#e0e0e0;font-weight:normal;letter-spacing:0.45px">Multiply</div>
<div class="a" style="left:1759px;top:586px;width:16px;height:20px;background:#8c8c8c;border-radius:1px"></div>
<svg style="left:1763px;top:590px" width="8" height="12"><path d="M1 5L4 1.5L7 5Z M1 7L4 10.5L7 7Z" fill="#333"/></svg>
<div class="a" style="left:1780px;top:173px;width:128px;height:19px;background:#cc2a08;"></div>
<div class="t" style="left:1784px;top:176.5px;font-size:11px;color:#f0b8a8;font-weight:normal;">12.47 ms</div>
<div class="a" style="left:1780px;top:357px;width:10px;height:18px;background:#2a9a3a;"></div>
<div class="t" style="left:1783px;top:360.5px;font-size:11px;color:#d0d0d0;font-weight:normal;">0.08 ms</div>
<div class="a" style="left:1780px;top:380px;width:3px;height:18px;background:#2a9a3a;"></div>
<div class="t" style="left:1783px;top:383.5px;font-size:11px;color:#d0d0d0;font-weight:normal;">0.02 ms</div>
<div class="a" style="left:1780px;top:402px;width:40px;height:18px;background:#5a8c2c;"></div>
<div class="t" style="left:1783px;top:405.5px;font-size:11px;color:#e0e0e0;font-weight:normal;">1.30 ms</div>
<div class="a" style="left:1780px;top:425px;width:56px;height:18px;background:#c4700c;"></div>
<div class="t" style="left:1783px;top:428.5px;font-size:11px;color:#f0c080;font-weight:normal;">2.42 ms</div>
<div class="a" style="left:1780px;top:448px;width:52px;height:18px;background:#c4700c;"></div>
<div class="t" style="left:1783px;top:451.5px;font-size:11px;color:#f0c080;font-weight:normal;">2.16 ms</div>
<div class="a" style="left:1780px;top:471px;width:112px;height:18px;background:#d42e08;"></div>
<div class="t" style="left:1783px;top:474.5px;font-size:11px;color:#f0b8a8;font-weight:normal;">9.62 ms</div>
<div class="a" style="left:1780px;top:494px;width:28px;height:18px;background:#5a8c2c;"></div>
<div class="t" style="left:1783px;top:497.5px;font-size:11px;color:#e0e0e0;font-weight:normal;">0.60 ms</div>
<div class="a" style="left:1780px;top:517px;width:6px;height:18px;background:#2a9a3a;"></div>
<div class="t" style="left:1783px;top:520.5px;font-size:11px;color:#d0d0d0;font-weight:normal;">0.03 ms</div>
<div class="a" style="left:1780px;top:540px;width:6px;height:18px;background:#2a9a3a;"></div>
<div class="t" style="left:1783px;top:543.5px;font-size:11px;color:#c8d8dc;font-weight:normal;">0.04 ms</div>
<div class="a" style="left:1952px;top:176px;width:12px;height:12px;background:#4cb85c;"></div>
<div class="a" style="left:1952px;top:199px;width:12px;height:12px;background:#1a1a1a;"></div>
<div class="a" style="left:1952px;top:222px;width:12px;height:12px;background:#1a1a1a;"></div>
<div class="a" style="left:1952px;top:245px;width:12px;height:12px;background:#4cb85c;"></div>
<div class="a" style="left:1952px;top:268px;width:12px;height:12px;background:#1a1a1a;"></div>
<div class="a" style="left:1952px;top:291px;width:12px;height:12px;background:#4cb85c;"></div>
<div class="a" style="left:1952px;top:314px;width:12px;height:12px;background:#1a1a1a;"></div>
<div class="a" style="left:1952px;top:337px;width:12px;height:12px;background:#1a1a1a;"></div>
<div class="a" style="left:1952px;top:360px;width:12px;height:12px;background:#4cb85c;"></div>
<div class="a" style="left:1952px;top:383px;width:12px;height:12px;background:#4cb85c;"></div>
<div class="a" style="left:1952px;top:406px;width:12px;height:12px;background:#4cb85c;"></div>
<div class="a" style="left:1952px;top:429px;width:12px;height:12px;background:#4cb85c;"></div>
<div class="a" style="left:1952px;top:452px;width:12px;height:12px;background:#4cb85c;"></div>
<div class="a" style="left:1952px;top:475px;width:12px;height:12px;background:#4cb85c;"></div>
<div class="a" style="left:1952px;top:498px;width:12px;height:12px;background:#4cb85c;"></div>
<div class="a" style="left:1952px;top:521px;width:12px;height:12px;background:#4cb85c;"></div>
<div class="a" style="left:1952px;top:544px;width:12px;height:12px;background:#4cb85c;"></div>
<div class="a" style="left:1952px;top:567px;width:12px;height:12px;background:#1a1a1a;"></div>
<div class="a" style="left:1952px;top:590px;width:12px;height:12px;background:#1a1a1a;"></div>
<div class="a" style="left:1966px;top:538px;width:3px;height:23px;background:#2a88a8;"></div>
<svg style="left:1356px;top:660px" width="14" height="22"><path d="M1 1V17L5 13L8 20L11 19L8 12H13Z" fill="#f4f4f4" stroke="#111" stroke-width="1"/></svg>
<svg style="left:1211px;top:720px" width="16" height="16"><circle cx="7" cy="7" r="5.5" fill="#d8e4e4"/><path d="M11 11L14.5 14.5" stroke="#aaa" stroke-width="2"/></svg>
<div class="a" style="left:1231px;top:717px;width:757px;height:22px;background:#0e0e0e;border:1px solid #262626"></div>
<div class="t" style="left:1237px;top:722.5px;font-size:11px;color:#363636;font-weight:normal;">Search in Compo (ctrl+f)</div>
<div class="a" style="left:1207px;top:750px;width:781px;height:1px;background:#161c1e;"></div>
<svg style="left:1204px;top:755px" width="200" height="30"><path d="M1 30 L9 1 L192 1 L200 30 Z" fill="#0c3545"/></svg>
<svg style="left:1400px;top:755px" width="155" height="30"><path d="M1 30 L7 3 Q8 1 11 1 L143 1 Q146 1 147 3 L155 30 Z" fill="#151515"/></svg>
<svg style="left:1218px;top:760px" width="14" height="16"><rect x="1" y="1" width="12" height="14" fill="#5a8a94"/><rect x="3" y="4" width="8" height="1.5" fill="#1a3a44"/><rect x="3" y="7.5" width="8" height="1.5" fill="#1a3a44"/><rect x="3" y="11" width="8" height="1.5" fill="#1a3a44"/></svg>
<div class="t" style="left:1240px;top:763.2px;font-size:11.5px;color:#d8e4e8;font-weight:normal;letter-spacing:0.5px">Parameters Editor *</div>
<svg style="left:1357px;top:760px" width="13" height="15"><path d="M3.5 7V5a3 3 0 0 1 6 0v2" fill="none" stroke="#ccc" stroke-width="1.6"/><rect x="1.5" y="7" width="10" height="7" fill="#ccc"/></svg>
<svg style="left:1378px;top:762px" width="12" height="12"><path d="M1 1L11 11M11 1L1 11" stroke="#f0f0f0" stroke-width="2.2"/></svg>
<svg style="left:1413px;top:761px" width="14" height="14"><circle cx="7" cy="8" r="5.5" fill="#6a78e0"/><circle cx="7" cy="8" r="2.5" fill="#e0e4ff"/><path d="M8 2L12 0.5" stroke="#aab" stroke-width="1.5"/></svg>
<div class="t" style="left:1441px;top:763.2px;font-size:11.5px;color:#8a8a8a;font-weight:normal;letter-spacing:0.4px">History Editor</div>
<svg style="left:1525px;top:762px" width="12" height="12"><path d="M1 1L11 11M11 1L1 11" stroke="#f0f0f0" stroke-width="2.2"/></svg>
<div class="a" style="left:1206px;top:783px;width:3px;height:325px;background:#0a3140;"></div>
<div class="a" style="left:1206px;top:783px;width:787px;height:2px;background:#0a3140;"></div>
<div class="a" style="left:1990px;top:783px;width:3px;height:325px;background:#0a3140;"></div>
<div class="a" style="left:1209px;top:785px;width:781px;height:323px;background:#0d0d0d;"></div>
<svg style="left:1213px;top:790px" width="14" height="16"><path d="M3.5 7V5a3.5 3.5 0 0 1 7 0v2" fill="none" stroke="#c8c8c8" stroke-width="1.8"/><rect x="1.5" y="7" width="11" height="8" fill="#c8c8c8"/></svg>
<div class="a" style="left:1230px;top:789px;width:19px;height:20px;background:#1a1c20;border-radius:2px"></div>
<svg style="left:1232px;top:793px" width="15" height="12"><path d="M1 7Q4 1 7 6T14 5" fill="none" stroke="#8898b0" stroke-width="1.6"/></svg>
<div class="a" style="left:1251px;top:788px;width:22px;height:22px;background:#262a26;border:1px solid #3a3e3a;border-radius:3px"></div>
<svg style="left:1253px;top:791px" width="18" height="16"><path d="M2 8L8 2.5V6H16V10H8V13.5Z" fill="#f4f4f4"/></svg>
<div class="a" style="left:1275px;top:788px;width:22px;height:22px;background:#1c1c1c;border:1px solid #2a2a2a;border-radius:3px"></div>
<svg style="left:1277px;top:791px" width="18" height="16"><path d="M16 8L10 2.5V6H2V10H10V13.5Z" fill="#5a5a5a"/></svg>
<div class="t" style="left:1308px;top:793.5px;font-size:11px;color:#cfcfcf;font-weight:normal;">DemoCreate -&gt; Group of shapes -&gt; Bezier</div>
<div class="t" style="left:1887px;top:792.5px;font-size:11px;color:#8a8a8a;font-weight:normal;">ADVANCED</div>
<div class="a" style="left:1959px;top:790px;width:20px;height:16px;background:#2a2a2a;border-radius:2px"></div>
<div class="a" style="left:1960px;top:791px;width:9px;height:14px;background:#e0e0e0;"></div>
<div class="a" style="left:1211px;top:815px;width:755px;height:93px;background:#1d1d1d;"></div>
<div class="a" style="left:1211px;top:918px;width:755px;height:46px;background:#1d1d1d;"></div>
<div class="a" style="left:1211px;top:974px;width:755px;height:126px;background:#1d1d1d;"></div>
<div class="a" style="left:1976px;top:815px;width:9px;height:235px;background:#262626;border-radius:4px"></div>
<svg style="left:1215px;top:821.5px" width="7" height="9"><path d="M0.5 0.5V8.5L6.5 4.5Z" fill="#5a5a5a"/></svg>
<svg style="left:1228px;top:816px" width="20" height="20"><rect x="1" y="1" width="18" height="18" rx="3" fill="#d04880"/><rect x="4" y="2" width="12" height="6" fill="#f4c8d8"/><rect x="4" y="11" width="12" height="6" fill="#f4f4f4"/></svg>
<div class="t" style="left:1257px;top:820.5px;font-size:11px;color:#ececec;font-weight:bold;">Preset</div>
<svg style="left:1228px;top:840px" width="18" height="18"><rect x="0" y="0" width="18" height="18" fill="#6a6a6a"/><circle cx="9" cy="9" r="6" fill="#aaa"/><circle cx="9" cy="9" r="2" fill="#555"/></svg>
<div class="t" style="left:1257px;top:843.5px;font-size:11px;color:#5a5a5a;font-weight:normal;">Edge Length</div>
<svg style="left:1228px;top:863px" width="18" height="18"><rect x="0.5" y="0.5" width="17" height="17" fill="#5a5a5a" stroke="#999"/><rect x="4" y="3" width="10" height="12" fill="none" stroke="#ccc" stroke-width="1.2"/><path d="M4 7H14M4 11H14" stroke="#ccc"/></svg>
<div class="t" style="left:1257px;top:866.5px;font-size:11px;color:#d8d8d8;font-weight:normal;">Merger</div>
<svg style="left:1228px;top:886px" width="18" height="18"><rect x="0" y="0" width="18" height="18" fill="#5a5a5a"/><text x="3" y="14" font-size="12" fill="#bbb" font-family="Liberation Sans" font-weight="bold">%</text></svg>
<div class="t" style="left:1257px;top:889.5px;font-size:11px;color:#5a5a5a;font-weight:normal;">Merge Opacity</div>
<svg style="left:1228px;top:919px" width="18" height="18"><circle cx="9" cy="9" r="8" fill="#5a5a5a" stroke="#888"/><circle cx="9" cy="9" r="3" fill="none" stroke="#bbb"/></svg>
<div class="t" style="left:1257px;top:922.5px;font-size:11px;color:#d8d8d8;font-weight:normal;">Path - Closed</div>
<svg style="left:1215px;top:946.5px" width="7" height="9"><path d="M0.5 0.5V8.5L6.5 4.5Z" fill="#5a5a5a"/></svg>
<svg style="left:1228px;top:941px" width="20" height="20"><path d="M1 5V1H5M15 1H19V5M19 15V19H15M5 19H1V15" fill="none" stroke="#999"/><path d="M4 17Q6 8 12 7L16 3" fill="none" stroke="#eee" stroke-width="1.8"/></svg>
<div class="t" style="left:1257px;top:945.5px;font-size:11px;color:#ececec;font-weight:bold;">Path - Points</div>
<svg style="left:1228px;top:976px" width="18" height="18"><rect x="0.5" y="0.5" width="17" height="17" fill="#6a6a6a" stroke="#aaa"/><text x="1.5" y="13" font-size="10" fill="#eee" font-family="Liberation Sans" font-weight="bold">txt</text></svg>
<div class="t" style="left:1257px;top:979.5px;font-size:11px;color:#d8d8d8;font-weight:normal;">Placement - Type</div>
<svg style="left:1215px;top:1003.5px" width="7" height="9"><path d="M0.5 0.5V8.5L6.5 4.5Z" fill="#5a5a5a"/></svg>
<svg style="left:1228px;top:998px" width="20" height="20"><rect x="1" y="1" width="18" height="18" rx="3" fill="#d04880"/><rect x="4" y="2" width="12" height="6" fill="#f4c8d8"/><rect x="4" y="11" width="12" height="6" fill="#f4f4f4"/></svg>
<div class="t" style="left:1257px;top:1002.5px;font-size:11px;color:#d8d8d8;font-weight:normal;">Placement - Preset</div>
<svg style="left:1215px;top:1026.5px" width="7" height="9"><path d="M0.5 0.5V8.5L6.5 4.5Z" fill="#5a5a5a"/></svg>
<svg style="left:1228px;top:1021px" width="20" height="20"><rect x="1" y="1" width="18" height="18" fill="#2a3a9a" stroke="#6a7ae0" stroke-width="1.2"/><path d="M10 5V15M5 10H15" stroke="#c8d0ff" stroke-width="1.2"/></svg>
<div class="t" style="left:1257px;top:1025.5px;font-size:11px;color:#d8d8d8;font-weight:normal;">Placement - Anchor</div>
<svg style="left:1215px;top:1049.5px" width="7" height="9"><path d="M0.5 0.5V8.5L6.5 4.5Z" fill="#5a5a5a"/></svg>
<svg style="left:1228px;top:1044px" width="20" height="20"><rect x="1" y="1" width="18" height="18" fill="#2a3a9a" stroke="#6a7ae0" stroke-width="1.2"/><path d="M10 5V15M5 10H15" stroke="#c8d0ff" stroke-width="1.2"/></svg>
<div class="t" style="left:1257px;top:1048.5px;font-size:11px;color:#d8d8d8;font-weight:normal;">Placement - Position</div>
<svg style="left:1215px;top:1072.5px" width="7" height="9"><path d="M0.5 0.5V8.5L6.5 4.5Z" fill="#5a5a5a"/></svg>
<svg style="left:1228px;top:1067px" width="20" height="20"><rect x="1" y="1" width="18" height="18" fill="#2a3a9a" stroke="#6a7ae0" stroke-width="1.2"/><path d="M10 5V15M5 10H15" stroke="#c8d0ff" stroke-width="1.2"/></svg>
<div class="t" style="left:1257px;top:1071.5px;font-size:11px;color:#d8d8d8;font-weight:normal;">Placement - Scale</div>
<div class="a" style="left:1562px;top:816px;width:307px;height:20px;background:#171717;border:1px solid #2c2c2c"></div>
<div class="t" style="left:1567px;top:820.5px;font-size:11px;color:#e0e0e0;font-weight:normal;">Default *</div>
<div class="a" style="left:1854px;top:816px;width:15px;height:20px;background:#8a8a8a;border-radius:1px"></div>
<svg style="left:1857px;top:820px" width="8" height="12"><path d="M1 5L4 1.5L7 5Z M1 7L4 10.5L7 7Z" fill="#333"/></svg>
<div class="a" style="left:1872px;top:816px;width:55px;height:20px;background:#232323;border:1px solid #2e2e2e;border-radius:3px"></div>
<div class="t" style="left:1872px;top:820.5px;width:55px;text-align:center;font-size:11px;color:#e0e0e0">Save as</div>
<div class="a" style="left:1930px;top:816px;width:39px;height:20px;background:#232323;border:1px solid #2e2e2e;border-radius:3px"></div>
<div class="t" style="left:1930px;top:820.5px;width:39px;text-align:center;font-size:11px;color:#e0e0e0">Edit</div>
<div class="t" style="left:1566px;top:843.5px;font-size:11px;color:#555;font-weight:normal;">962.725 px</div>
<div class="a" style="left:1562px;top:862px;width:404px;height:20px;background:#171717;border:1px solid #2c2c2c"></div>
<div class="t" style="left:1567px;top:866.5px;font-size:11px;color:#e0e0e0;font-weight:normal;">Pass Through</div>
<div class="a" style="left:1951px;top:862px;width:15px;height:20px;background:#8a8a8a;border-radius:1px"></div>
<svg style="left:1954px;top:866px" width="8" height="12"><path d="M1 5L4 1.5L7 5Z M1 7L4 10.5L7 7Z" fill="#333"/></svg>
<div class="t" style="left:1566px;top:889.5px;font-size:11px;color:#555;font-weight:normal;">100.000 %</div>
<div class="a" style="left:1563px;top:918px;width:403px;height:20px;background:#232323;border:1px solid #2a2a2a;border-radius:3px"></div>
<div class="a" style="left:1760px;top:927px;width:7px;height:2px;background:#555;"></div>
<div class="a" style="left:1562px;top:975px;width:381px;height:20px;background:#171717;border:1px solid #2c2c2c"></div>
<div class="t" style="left:1567px;top:979.5px;font-size:11px;color:#e0e0e0;font-weight:normal;">Parametric</div>
<div class="a" style="left:1928px;top:975px;width:15px;height:20px;background:#8a8a8a;border-radius:1px"></div>
<svg style="left:1931px;top:979px" width="8" height="12"><path d="M1 5L4 1.5L7 5Z M1 7L4 10.5L7 7Z" fill="#333"/></svg>
<div class="a" style="left:1946px;top:975px;width:20px;height:20px;background:#1c1c24;border:1px solid #2a2a2a;border-radius:2px"></div>
<div class="a" style="left:1951px;top:980px;width:10px;height:10px;background:#4858c0;"></div>
<div class="a" style="left:1562px;top:998px;width:307px;height:20px;background:#171717;border:1px solid #2c2c2c"></div>
<div class="t" style="left:1567px;top:1002.5px;font-size:11px;color:#e0e0e0;font-weight:normal;">Default</div>
<div class="a" style="left:1854px;top:998px;width:15px;height:20px;background:#8a8a8a;border-radius:1px"></div>
<svg style="left:1857px;top:1002px" width="8" height="12"><path d="M1 5L4 1.5L7 5Z M1 7L4 10.5L7 7Z" fill="#333"/></svg>
<div class="a" style="left:1872px;top:998px;width:55px;height:20px;background:#232323;border:1px solid #2e2e2e;border-radius:3px"></div>
<div class="t" style="left:1872px;top:1002.5px;width:55px;text-align:center;font-size:11px;color:#e0e0e0">Save as</div>
<div class="a" style="left:1930px;top:998px;width:39px;height:20px;background:#232323;border:1px solid #2e2e2e;border-radius:3px"></div>
<div class="t" style="left:1930px;top:1002.5px;width:39px;text-align:center;font-size:11px;color:#e0e0e0">Edit</div>
<div class="t" style="left:1566px;top:1025.5px;font-size:11px;color:#e0e0e0;font-weight:normal;">50 %</div>
<svg style="left:1749px;top:1023px" width="10" height="16"><path d="M1 6.5L5 1.5L9 6.5Z M1 9.5L5 14.5L9 9.5Z" fill="#4a4a4a"/></svg>
<div class="t" style="left:1770px;top:1025.5px;font-size:11px;color:#e0e0e0;font-weight:normal;">50 %</div>
<svg style="left:1953px;top:1023px" width="10" height="16"><path d="M1 6.5L5 1.5L9 6.5Z M1 9.5L5 14.5L9 9.5Z" fill="#4a4a4a"/></svg>
<div class="t" style="left:1566px;top:1048.5px;font-size:11px;color:#e0e0e0;font-weight:normal;">50 %</div>
<svg style="left:1749px;top:1046px" width="10" height="16"><path d="M1 6.5L5 1.5L9 6.5Z M1 9.5L5 14.5L9 9.5Z" fill="#4a4a4a"/></svg>
<div class="t" style="left:1770px;top:1048.5px;font-size:11px;color:#e0e0e0;font-weight:normal;">50 %</div>
<svg style="left:1953px;top:1046px" width="10" height="16"><path d="M1 6.5L5 1.5L9 6.5Z M1 9.5L5 14.5L9 9.5Z" fill="#4a4a4a"/></svg>
<div class="a" style="left:1562px;top:1067px;width:92px;height:20px;background:#171717;border:1px solid #2c2c2c"></div>
<div class="t" style="left:1567px;top:1071.5px;font-size:11px;color:#e0e0e0;font-weight:normal;">Scale factor</div>
<div class="a" style="left:1639px;top:1067px;width:15px;height:20px;background:#8a8a8a;border-radius:1px"></div>
<svg style="left:1642px;top:1071px" width="8" height="12"><path d="M1 5L4 1.5L7 5Z M1 7L4 10.5L7 7Z" fill="#333"/></svg>
<div class="t" style="left:1661px;top:1071.5px;font-size:11px;color:#e0e0e0;font-weight:normal;">100.000 %</div>
<svg style="left:1784px;top:1069px" width="10" height="16"><path d="M1 6.5L5 1.5L9 6.5Z M1 9.5L5 14.5L9 9.5Z" fill="#4a4a4a"/></svg>
<svg style="left:1802px;top:1072px" width="20" height="10"><circle cx="5" cy="5" r="3.5" fill="none" stroke="#ddd" stroke-width="1.6"/><circle cx="15" cy="5" r="3.5" fill="none" stroke="#ddd" stroke-width="1.6"/><path d="M8 5H12" stroke="#ddd" stroke-width="1.6"/></svg>
<div class="t" style="left:1831px;top:1071.5px;font-size:11px;color:#e0e0e0;font-weight:normal;">100.000 %</div>
<svg style="left:1953px;top:1069px" width="10" height="16"><path d="M1 6.5L5 1.5L9 6.5Z M1 9.5L5 14.5L9 9.5Z" fill="#4a4a4a"/></svg>
<div class="a" style="left:1211px;top:1091px;width:755px;height:9px;overflow:hidden"><div class="t" style="left:46px;top:3px;font-size:11px;color:#bbb">Placement - Rotation</div><div class="t" style="left:355px;top:3px;font-size:11px;color:#bbb">0 deg</div><div class="a" style="left:17px;top:2px;width:18px;height:10px;background:#5a5a5a"></div></div>
<div class="a" style="left:1996px;top:90px;width:4px;height:1022px;background:#06304a;"></div>
<div class="a" style="left:0px;top:118px;width:3px;height:14px;background:#6a6a90;"></div>
<div class="a" style="left:0px;top:190px;width:3px;height:6px;background:#bbb;"></div>
<div class="a" style="left:0px;top:225px;width:3px;height:10px;background:#555;"></div>
<div class="a" style="left:0px;top:346px;width:2px;height:10px;background:#444;"></div>
<div class="a" style="left:0px;top:380px;width:2px;height:8px;background:#555;"></div>
<div class="a" style="left:0px;top:420px;width:2px;height:8px;background:#444;"></div>
<svg style="left:15px;top:1100px" width="1180" height="8"><rect x="18" y="3.5" width="12" height="3" fill="#555"/><rect x="34" y="3.5" width="3" height="3" fill="#555"/><rect x="50" y="3.5" width="35" height="3" fill="#4a4a4a"/><rect x="88" y="3.5" width="12" height="3" fill="#4a4a4a"/><rect x="104" y="3.5" width="14" height="3" fill="#4a4a4a"/><rect x="122" y="3.5" width="6" height="3" fill="#3a3a3a"/><rect x="177" y="3.5" width="8" height="3" fill="#9a9a9a"/><rect x="209" y="3.5" width="17" height="3" fill="#333"/><rect x="239" y="3.5" width="47" height="3" fill="#383838"/><rect x="291" y="3.5" width="32" height="3" fill="#3a3a3a"/><rect x="384" y="3.5" width="7" height="3" fill="#888"/><rect x="410" y="3.5" width="25" height="3" fill="#444"/><rect x="443" y="3.5" width="58" height="3" fill="#333"/><rect x="505" y="3.5" width="43" height="3" fill="#3a3a3a"/><rect x="576" y="3.5" width="9" height="3" fill="#777"/></svg>
</body></html>
